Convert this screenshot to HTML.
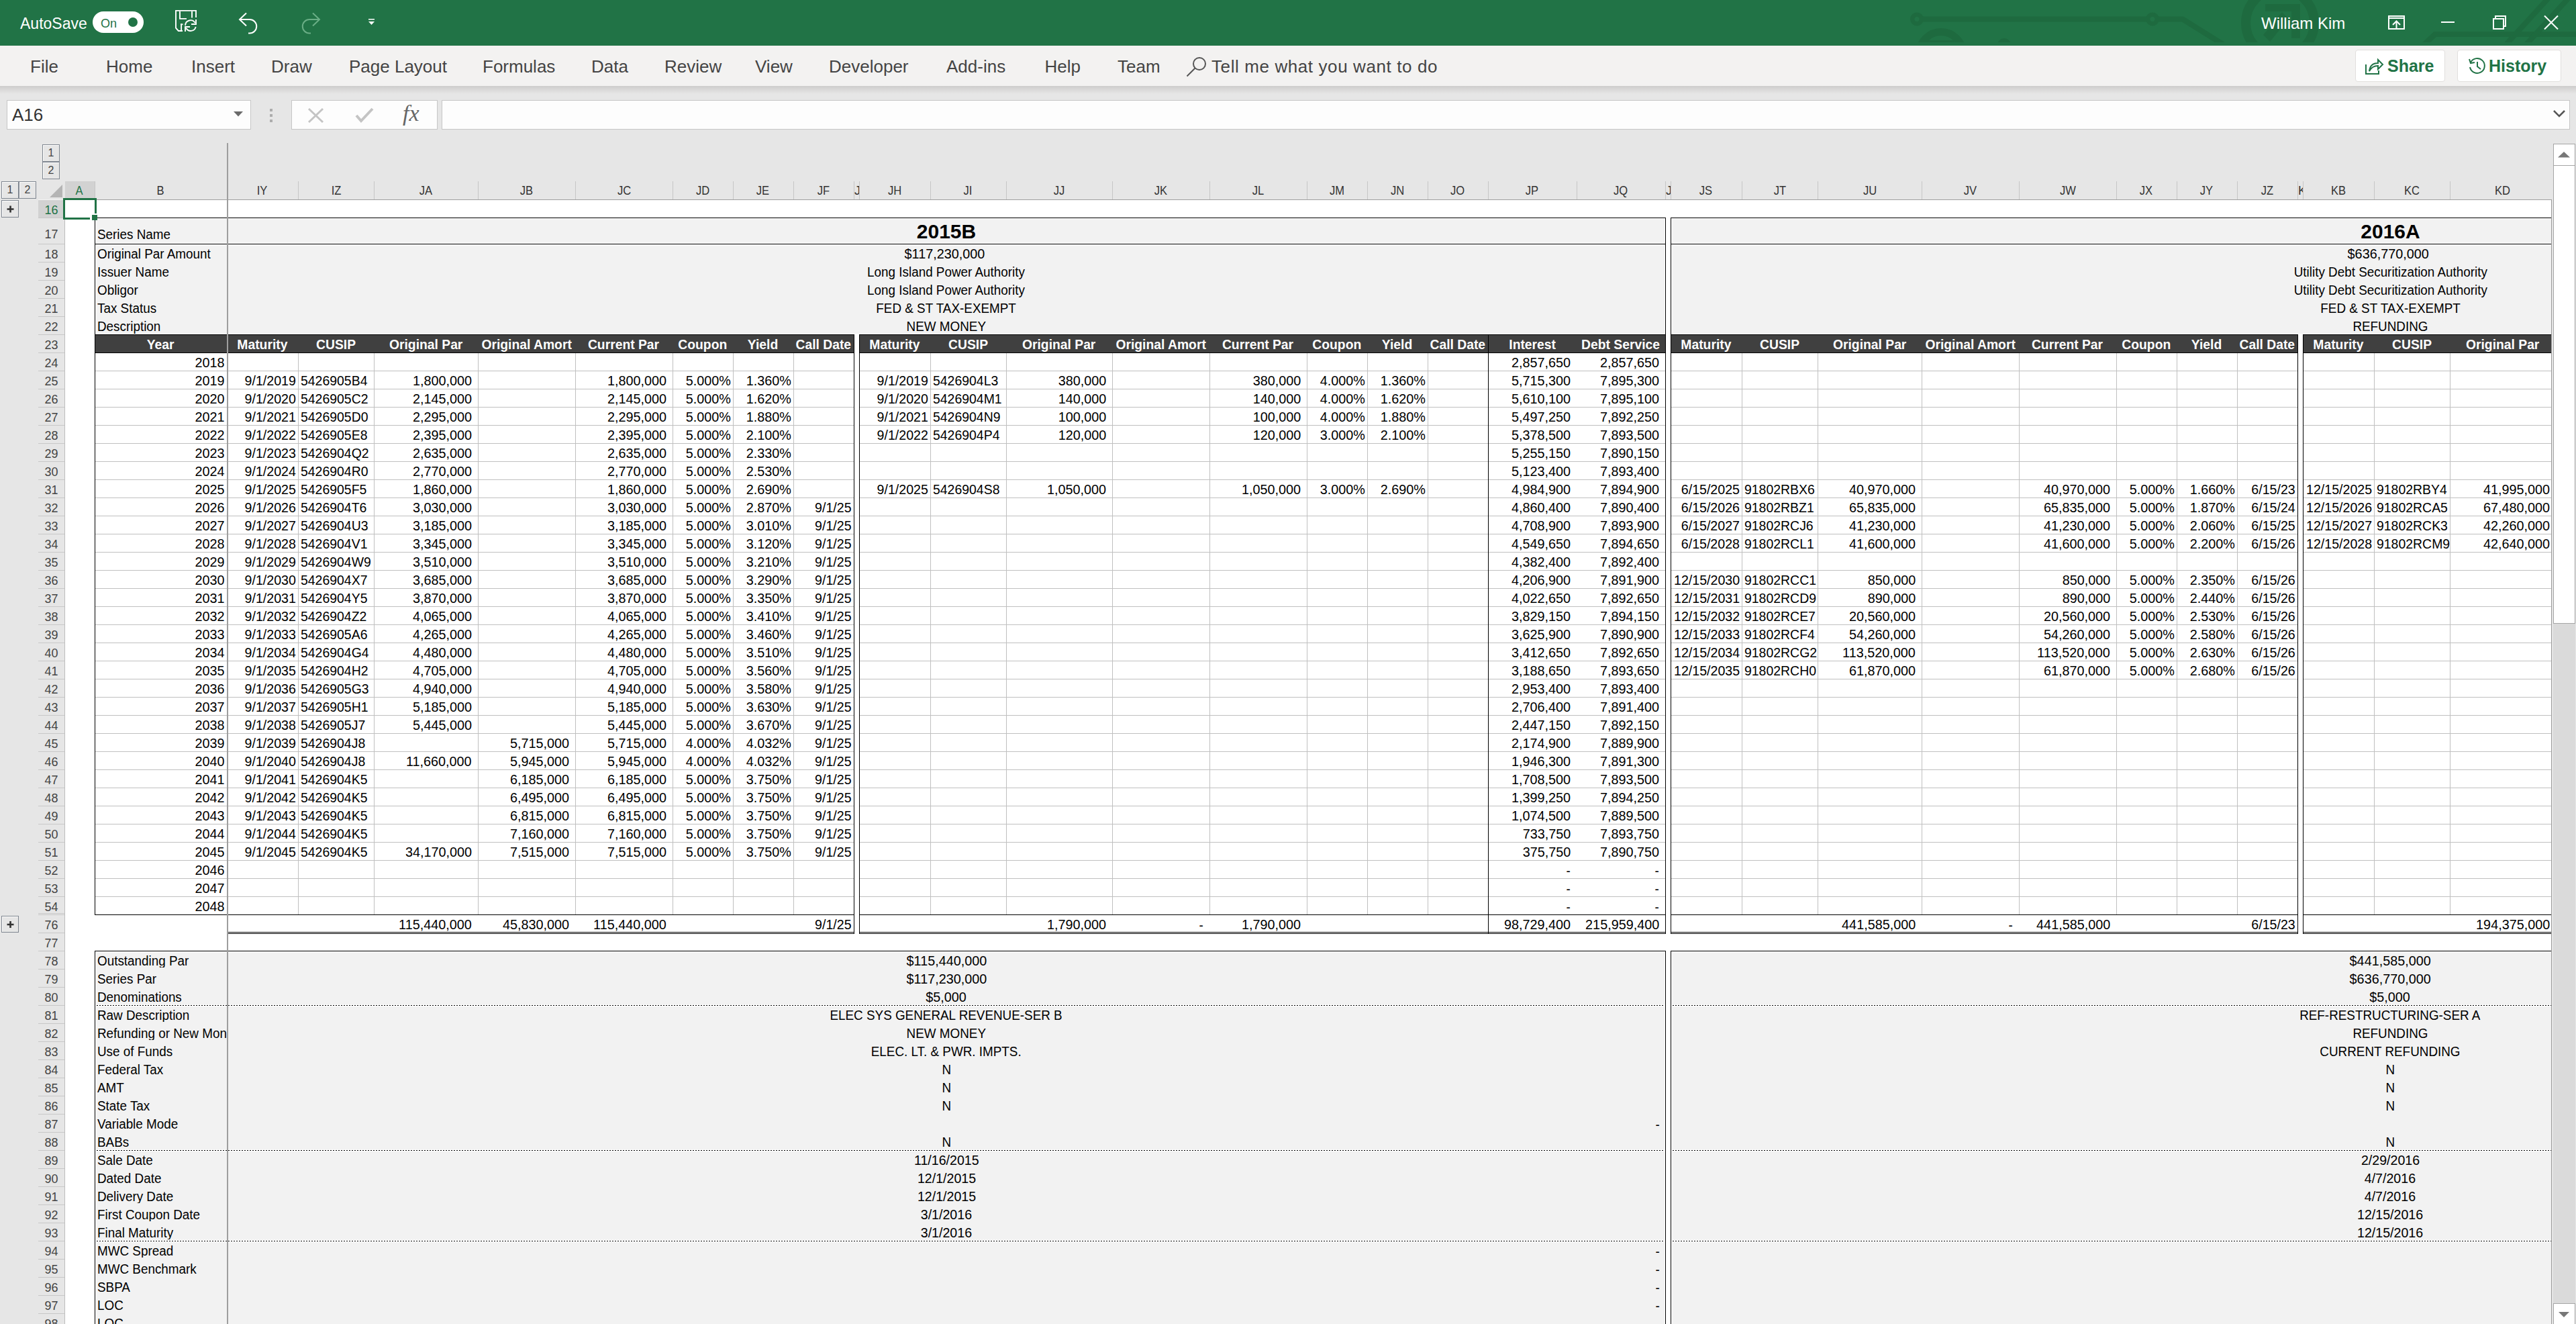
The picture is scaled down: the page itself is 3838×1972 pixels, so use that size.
<!DOCTYPE html><html><head><meta charset="utf-8"><style>html,body{margin:0;padding:0;width:3838px;height:1972px;overflow:hidden;background:#fff}body{position:relative;font-family:"Liberation Sans",sans-serif}div{position:absolute;box-sizing:border-box}.t{white-space:nowrap}</style></head><body>
<div style="left:0px;top:0px;width:3838px;height:68px;background:#217346;"></div>
<svg style="position:absolute;left:0;top:0" width="3838" height="63" viewBox="0 0 3838 63"><g fill="none" stroke="#1e6a3f" stroke-linecap="butt"><circle cx="2856" cy="28.5" r="6.8" stroke-width="6.5"/><line x1="2862" y1="28.5" x2="3201" y2="28.5" stroke-width="8"/><circle cx="3207" cy="28.5" r="6.8" stroke-width="6.5"/><polyline points="3213,28.5 3252,28.5 3312,66" stroke-width="8"/><circle cx="2892" cy="80" r="32.5" stroke-width="11"/><line x1="2870" y1="63" x2="2912" y2="63" stroke-width="6"/><circle cx="3397" cy="34" r="51" stroke-width="14"/><polyline points="3612,66 3628,51 3838,51" stroke-width="8"/><line x1="3798" y1="-4" x2="3734" y2="66" stroke-width="8"/><line x1="3828" y1="-4" x2="3764" y2="66" stroke-width="8"/></g><g fill="#1e6a3f"><circle cx="2986" cy="67" r="10"/><rect x="3375" y="6" width="52" height="11"/><rect x="3414" y="6" width="13" height="51"/><polygon points="3400,18 3410,28 3382,62 3372,52"/></g></svg>
<div class="t" style="left:30px;top:22px;font-size:23px;line-height:26px;font-weight:normal;color:#fff;">AutoSave</div>
<div style="left:138px;top:17px;width:76px;height:32px;border-radius:16px;background:#fff"></div>
<div class="t" style="left:150px;top:25px;font-size:18px;line-height:20px;font-weight:normal;color:#217346;">On</div>
<div style="left:190.5px;top:25.5px;width:14.5px;height:14.5px;border-radius:50%;background:#217346"></div>
<svg style="position:absolute;left:256px;top:10px" width="42" height="42" viewBox="256 10 42 42" fill="none" stroke="#fff" stroke-width="1.9"><path d="M292 26 L292 15.9 L262 15.9 L262 41.7 L265.8 46 L272 46"/><path d="M268 16.8 L268 27.9 L278 27.9"/><path d="M286 16.8 L286 26.5"/><path d="M270.1 35.4 L270.1 47"/><path d="M269 36.3 L272.5 36.3"/><path d="M276.1 37.9 A 7.8 7.8 0 0 1 290.6 34"/><path d="M292 29 L292 36 L285 36"/><path d="M291.7 39.9 A 7.8 7.8 0 0 1 277.2 41.8"/><path d="M276 47 L276 40 L283 40"/></svg>
<svg style="position:absolute;left:350px;top:14px" width="40" height="40" viewBox="0 0 40 40" fill="none" stroke="#fff" stroke-width="2"><path d="M17 5.5 L7 15 L17 24.5"/><path d="M7 15 L22 15 A 10 10 0 0 1 22 35.5 L 20 35.5"/></svg>
<svg style="position:absolute;left:443px;top:14px" width="40" height="40" viewBox="0 0 40 40" fill="none" stroke="#6aae86" stroke-width="2"><path d="M23 5.5 L33 15 L23 24.5"/><path d="M33 15 L18 15 A 10 10 0 0 0 18 35.5 L 20 35.5"/></svg>
<svg style="position:absolute;left:545px;top:24px" width="18" height="18" viewBox="0 0 18 18"><rect x="4" y="4" width="9" height="1.5" fill="#fff"/><polygon points="4,8 13,8 8.5,13" fill="#fff"/></svg>
<div class="t" style="left:3369px;top:21px;font-size:24px;line-height:28px;font-weight:normal;color:#fff;">William Kim</div>
<svg style="position:absolute;left:3540px;top:10px" width="298" height="50" viewBox="3540 10 298 50" fill="none" stroke="#fff" stroke-width="2"><rect x="3559" y="24" width="23" height="19"/><line x1="3559" y1="27" x2="3582" y2="27"/><line x1="3570.5" y1="32" x2="3570.5" y2="43"/><polyline points="3565,37 3570.5,31.5 3576,37"/><line x1="3637" y1="33" x2="3657" y2="33"/><rect x="3715" y="28" width="15" height="15"/><polyline points="3718,28 3718,24 3733,24 3733,39 3730,39"/><line x1="3791" y1="23.5" x2="3811" y2="43.5"/><line x1="3811" y1="23.5" x2="3791" y2="43.5"/></svg>
<div style="left:0px;top:68px;width:3838px;height:60px;background:#f3f2f1;"></div>
<div class="t" style="left:45px;top:84px;font-size:26px;line-height:30px;color:#444">File</div>
<div class="t" style="left:158px;top:84px;font-size:26px;line-height:30px;color:#444">Home</div>
<div class="t" style="left:285px;top:84px;font-size:26px;line-height:30px;color:#444">Insert</div>
<div class="t" style="left:404px;top:84px;font-size:26px;line-height:30px;color:#444">Draw</div>
<div class="t" style="left:520px;top:84px;font-size:26px;line-height:30px;color:#444">Page Layout</div>
<div class="t" style="left:719px;top:84px;font-size:26px;line-height:30px;color:#444">Formulas</div>
<div class="t" style="left:881px;top:84px;font-size:26px;line-height:30px;color:#444">Data</div>
<div class="t" style="left:990px;top:84px;font-size:26px;line-height:30px;color:#444">Review</div>
<div class="t" style="left:1125px;top:84px;font-size:26px;line-height:30px;color:#444">View</div>
<div class="t" style="left:1235px;top:84px;font-size:26px;line-height:30px;color:#444">Developer</div>
<div class="t" style="left:1410px;top:84px;font-size:26px;line-height:30px;color:#444">Add-ins</div>
<div class="t" style="left:1556.5px;top:84px;font-size:26px;line-height:30px;color:#444">Help</div>
<div class="t" style="left:1665px;top:84px;font-size:26px;line-height:30px;color:#444">Team</div>
<svg style="position:absolute;left:1760px;top:80px" width="40" height="40" viewBox="1760 80 40 40" fill="none" stroke="#555" stroke-width="2"><circle cx="1787" cy="95" r="9"/><line x1="1780.5" y1="101.5" x2="1768.5" y2="113.5"/></svg>
<div class="t" style="left:1805px;top:84px;font-size:26px;line-height:30px;color:#444;letter-spacing:0.6px">Tell me what you want to do</div>
<div style="left:3509px;top:74px;width:134px;height:48px;background:#fff;border:1px solid #e1dfdd;border-radius:4px"></div>
<div style="left:3661px;top:74px;width:155px;height:48px;background:#fff;border:1px solid #e1dfdd;border-radius:4px"></div>
<svg style="position:absolute;left:3522px;top:84px" width="30" height="30" viewBox="0 0 30 30" fill="none" stroke="#217346" stroke-width="2"><path d="M3 12 L3 26 L22 26 L22 21"/><path d="M8 22 C 9 13 14 10 21 10 L21 5 L28 12 L21 19 L21 14 C 15 14 11 16 8 22 Z"/></svg>
<div class="t" style="left:3557px;top:83px;font-size:25px;line-height:30px;font-weight:bold;color:#217346">Share</div>
<svg style="position:absolute;left:3676px;top:84px" width="30" height="30" viewBox="0 0 30 30" fill="none" stroke="#217346" stroke-width="2"><path d="M5 9 A 11 11 0 1 1 4 16"/><polyline points="3,4 5,10 11,9"/><polyline points="15,8 15,15 20,19"/></svg>
<div class="t" style="left:3708px;top:83px;font-size:25px;line-height:30px;font-weight:bold;color:#217346">History</div>
<div style="left:0px;top:128px;width:3838px;height:169px;background:#e6e6e6;"></div>
<div style="left:0;top:128px;width:3838px;height:12px;background:linear-gradient(#cecdcc,#e6e6e6)"></div>
<div style="left:10px;top:149px;width:364px;height:44px;background:#fdfdfd;border:1px solid #c6c6c6"></div>
<div class="t" style="left:18px;top:156px;font-size:26px;line-height:30px;color:#333">A16</div>
<svg style="position:absolute;left:346px;top:164px" width="18" height="12" viewBox="0 0 18 12"><polygon points="2,2 16,2 9,9.5" fill="#6a6a6a"/></svg>
<div style="left:402px;top:162px;width:4px;height:4px;background:#adadad;"></div>
<div style="left:402px;top:170px;width:4px;height:4px;background:#adadad;"></div>
<div style="left:402px;top:178px;width:4px;height:4px;background:#adadad;"></div>
<div style="left:434px;top:149px;width:218px;height:44px;background:#fdfdfd;border:1px solid #c6c6c6"></div>
<svg style="position:absolute;left:455px;top:158px" width="32" height="28" viewBox="0 0 32 28" fill="none" stroke="#c4c4c4" stroke-width="3"><line x1="5" y1="4" x2="26" y2="24"/><line x1="26" y1="4" x2="5" y2="24"/></svg>
<svg style="position:absolute;left:527px;top:158px" width="32" height="28" viewBox="0 0 32 28" fill="none" stroke="#c4c4c4" stroke-width="4"><polyline points="4,14 11,22 28,4"/></svg>
<div class="t" style="left:600px;top:150px;font-family:'Liberation Serif',serif;font-style:italic;font-size:34px;line-height:38px;color:#666">fx</div>
<div style="left:658px;top:149px;width:3171px;height:44px;background:#fdfdfd;border:1px solid #c6c6c6"></div>
<svg style="position:absolute;left:3800px;top:160px" width="26" height="20" viewBox="0 0 26 20" fill="none" stroke="#555" stroke-width="2.5"><polyline points="5,5 13,13 21,5"/></svg>
<div style="left:63px;top:215px;width:26px;height:26px;border:1px solid #7f8690;background:#e6e6e6;box-shadow:inset 1px 1px 0 #fff"></div>
<div class="t" style="left:63px;width:26px;top:219px;font-size:16px;line-height:18px;color:#444;text-align:center">1</div>
<div style="left:63px;top:241px;width:26px;height:26px;border:1px solid #7f8690;background:#e6e6e6;box-shadow:inset 1px 1px 0 #fff"></div>
<div class="t" style="left:63px;width:26px;top:245px;font-size:16px;line-height:18px;color:#444;text-align:center">2</div>
<div style="left:2px;top:270px;width:26px;height:26px;border:1px solid #7f8690;background:#e6e6e6;box-shadow:inset 1px 1px 0 #fff"></div>
<div class="t" style="left:2px;width:26px;top:274px;font-size:16px;line-height:18px;color:#444;text-align:center">1</div>
<div style="left:28px;top:270px;width:26px;height:26px;border:1px solid #7f8690;background:#e6e6e6;box-shadow:inset 1px 1px 0 #fff"></div>
<div class="t" style="left:28px;width:26px;top:274px;font-size:16px;line-height:18px;color:#444;text-align:center">2</div>
<svg style="position:absolute;left:72px;top:273px" width="24" height="24" viewBox="0 0 24 24"><polygon points="21,2 21,21 2,21" fill="#b4b4b4"/></svg>
<div style="left:97px;top:270px;width:44px;height:27px;background:#d2d2d2;"></div>
<div class="t" style="left:96px;width:45px;top:274px;font-size:18px;line-height:20px;color:#217346;text-align:center"><span style="display:inline-block;transform:scaleX(0.92)">A</span></div>
<div class="t" style="left:141px;width:197px;top:274px;font-size:18px;line-height:20px;color:#333;text-align:center"><span style="display:inline-block;transform:scaleX(0.92)">B</span></div>
<div class="t" style="left:338px;width:106px;top:274px;font-size:18px;line-height:20px;color:#333;text-align:center"><span style="display:inline-block;transform:scaleX(0.92)">IY</span></div>
<div style="left:444px;top:270px;width:1px;height:27px;background:#c6c6c6;"></div>
<div class="t" style="left:444px;width:113px;top:274px;font-size:18px;line-height:20px;color:#333;text-align:center"><span style="display:inline-block;transform:scaleX(0.92)">IZ</span></div>
<div style="left:557px;top:270px;width:1px;height:27px;background:#c6c6c6;"></div>
<div class="t" style="left:557px;width:155px;top:274px;font-size:18px;line-height:20px;color:#333;text-align:center"><span style="display:inline-block;transform:scaleX(0.92)">JA</span></div>
<div style="left:712px;top:270px;width:1px;height:27px;background:#c6c6c6;"></div>
<div class="t" style="left:712px;width:145px;top:274px;font-size:18px;line-height:20px;color:#333;text-align:center"><span style="display:inline-block;transform:scaleX(0.92)">JB</span></div>
<div style="left:857px;top:270px;width:1px;height:27px;background:#c6c6c6;"></div>
<div class="t" style="left:857px;width:145px;top:274px;font-size:18px;line-height:20px;color:#333;text-align:center"><span style="display:inline-block;transform:scaleX(0.92)">JC</span></div>
<div style="left:1002px;top:270px;width:1px;height:27px;background:#c6c6c6;"></div>
<div class="t" style="left:1002px;width:90px;top:274px;font-size:18px;line-height:20px;color:#333;text-align:center"><span style="display:inline-block;transform:scaleX(0.92)">JD</span></div>
<div style="left:1092px;top:270px;width:1px;height:27px;background:#c6c6c6;"></div>
<div class="t" style="left:1092px;width:90px;top:274px;font-size:18px;line-height:20px;color:#333;text-align:center"><span style="display:inline-block;transform:scaleX(0.92)">JE</span></div>
<div style="left:1182px;top:270px;width:1px;height:27px;background:#c6c6c6;"></div>
<div class="t" style="left:1182px;width:90px;top:274px;font-size:18px;line-height:20px;color:#333;text-align:center"><span style="display:inline-block;transform:scaleX(0.92)">JF</span></div>
<div style="left:1272px;top:270px;width:1px;height:27px;background:#c6c6c6;"></div>
<div class="t" style="left:1272px;width:8px;overflow:hidden;top:274px;font-size:18px;line-height:20px;color:#333"><span style="position:relative;left:1px">J</span></div>
<div style="left:1280px;top:270px;width:1px;height:27px;background:#c6c6c6;"></div>
<div class="t" style="left:1280px;width:106px;top:274px;font-size:18px;line-height:20px;color:#333;text-align:center"><span style="display:inline-block;transform:scaleX(0.92)">JH</span></div>
<div style="left:1386px;top:270px;width:1px;height:27px;background:#c6c6c6;"></div>
<div class="t" style="left:1386px;width:113px;top:274px;font-size:18px;line-height:20px;color:#333;text-align:center"><span style="display:inline-block;transform:scaleX(0.92)">JI</span></div>
<div style="left:1499px;top:270px;width:1px;height:27px;background:#c6c6c6;"></div>
<div class="t" style="left:1499px;width:158px;top:274px;font-size:18px;line-height:20px;color:#333;text-align:center"><span style="display:inline-block;transform:scaleX(0.92)">JJ</span></div>
<div style="left:1657px;top:270px;width:1px;height:27px;background:#c6c6c6;"></div>
<div class="t" style="left:1657px;width:145px;top:274px;font-size:18px;line-height:20px;color:#333;text-align:center"><span style="display:inline-block;transform:scaleX(0.92)">JK</span></div>
<div style="left:1802px;top:270px;width:1px;height:27px;background:#c6c6c6;"></div>
<div class="t" style="left:1802px;width:145px;top:274px;font-size:18px;line-height:20px;color:#333;text-align:center"><span style="display:inline-block;transform:scaleX(0.92)">JL</span></div>
<div style="left:1947px;top:270px;width:1px;height:27px;background:#c6c6c6;"></div>
<div class="t" style="left:1947px;width:90px;top:274px;font-size:18px;line-height:20px;color:#333;text-align:center"><span style="display:inline-block;transform:scaleX(0.92)">JM</span></div>
<div style="left:2037px;top:270px;width:1px;height:27px;background:#c6c6c6;"></div>
<div class="t" style="left:2037px;width:90px;top:274px;font-size:18px;line-height:20px;color:#333;text-align:center"><span style="display:inline-block;transform:scaleX(0.92)">JN</span></div>
<div style="left:2127px;top:270px;width:1px;height:27px;background:#c6c6c6;"></div>
<div class="t" style="left:2127px;width:90px;top:274px;font-size:18px;line-height:20px;color:#333;text-align:center"><span style="display:inline-block;transform:scaleX(0.92)">JO</span></div>
<div style="left:2217px;top:270px;width:1px;height:27px;background:#c6c6c6;"></div>
<div class="t" style="left:2217px;width:132px;top:274px;font-size:18px;line-height:20px;color:#333;text-align:center"><span style="display:inline-block;transform:scaleX(0.92)">JP</span></div>
<div style="left:2349px;top:270px;width:1px;height:27px;background:#c6c6c6;"></div>
<div class="t" style="left:2349px;width:132px;top:274px;font-size:18px;line-height:20px;color:#333;text-align:center"><span style="display:inline-block;transform:scaleX(0.92)">JQ</span></div>
<div style="left:2481px;top:270px;width:1px;height:27px;background:#c6c6c6;"></div>
<div class="t" style="left:2481px;width:8px;overflow:hidden;top:274px;font-size:18px;line-height:20px;color:#333"><span style="position:relative;left:1px">J</span></div>
<div style="left:2489px;top:270px;width:1px;height:27px;background:#c6c6c6;"></div>
<div class="t" style="left:2489px;width:106px;top:274px;font-size:18px;line-height:20px;color:#333;text-align:center"><span style="display:inline-block;transform:scaleX(0.92)">JS</span></div>
<div style="left:2595px;top:270px;width:1px;height:27px;background:#c6c6c6;"></div>
<div class="t" style="left:2595px;width:113px;top:274px;font-size:18px;line-height:20px;color:#333;text-align:center"><span style="display:inline-block;transform:scaleX(0.92)">JT</span></div>
<div style="left:2708px;top:270px;width:1px;height:27px;background:#c6c6c6;"></div>
<div class="t" style="left:2708px;width:155px;top:274px;font-size:18px;line-height:20px;color:#333;text-align:center"><span style="display:inline-block;transform:scaleX(0.92)">JU</span></div>
<div style="left:2863px;top:270px;width:1px;height:27px;background:#c6c6c6;"></div>
<div class="t" style="left:2863px;width:145px;top:274px;font-size:18px;line-height:20px;color:#333;text-align:center"><span style="display:inline-block;transform:scaleX(0.92)">JV</span></div>
<div style="left:3008px;top:270px;width:1px;height:27px;background:#c6c6c6;"></div>
<div class="t" style="left:3008px;width:145px;top:274px;font-size:18px;line-height:20px;color:#333;text-align:center"><span style="display:inline-block;transform:scaleX(0.92)">JW</span></div>
<div style="left:3153px;top:270px;width:1px;height:27px;background:#c6c6c6;"></div>
<div class="t" style="left:3153px;width:90px;top:274px;font-size:18px;line-height:20px;color:#333;text-align:center"><span style="display:inline-block;transform:scaleX(0.92)">JX</span></div>
<div style="left:3243px;top:270px;width:1px;height:27px;background:#c6c6c6;"></div>
<div class="t" style="left:3243px;width:90px;top:274px;font-size:18px;line-height:20px;color:#333;text-align:center"><span style="display:inline-block;transform:scaleX(0.92)">JY</span></div>
<div style="left:3333px;top:270px;width:1px;height:27px;background:#c6c6c6;"></div>
<div class="t" style="left:3333px;width:90px;top:274px;font-size:18px;line-height:20px;color:#333;text-align:center"><span style="display:inline-block;transform:scaleX(0.92)">JZ</span></div>
<div style="left:3423px;top:270px;width:1px;height:27px;background:#c6c6c6;"></div>
<div class="t" style="left:3423px;width:8px;overflow:hidden;top:274px;font-size:18px;line-height:20px;color:#333"><span style="position:relative;left:1px">K</span></div>
<div style="left:3431px;top:270px;width:1px;height:27px;background:#c6c6c6;"></div>
<div class="t" style="left:3431px;width:106px;top:274px;font-size:18px;line-height:20px;color:#333;text-align:center"><span style="display:inline-block;transform:scaleX(0.92)">KB</span></div>
<div style="left:3537px;top:270px;width:1px;height:27px;background:#c6c6c6;"></div>
<div class="t" style="left:3537px;width:113px;top:274px;font-size:18px;line-height:20px;color:#333;text-align:center"><span style="display:inline-block;transform:scaleX(0.92)">KC</span></div>
<div style="left:3650px;top:270px;width:1px;height:27px;background:#c6c6c6;"></div>
<div class="t" style="left:3650px;width:158px;top:274px;font-size:18px;line-height:20px;color:#333;text-align:center"><span style="display:inline-block;transform:scaleX(0.92)">KD</span></div>
<div style="left:141px;top:270px;width:1px;height:27px;background:#c6c6c6;"></div>
<div style="left:96px;top:297px;width:3706px;height:1px;background:#9e9e9e;"></div>
<div style="left:0px;top:297px;width:96px;height:1675px;background:#e6e6e6;"></div>
<div style="left:57px;top:297px;width:39px;height:1px;background:#f4f4f4;"></div>
<div style="left:57px;top:298px;width:39px;height:1px;background:#b8b8b8;"></div>
<div style="left:57px;top:298px;width:39px;height:26px;background:#d2d2d2;"></div>
<div style="left:57px;top:324px;width:39px;height:1px;background:#c8c8c8;"></div>
<div class="t" style="left:57px;width:39px;top:303px;font-size:18px;line-height:20px;color:#217346;text-align:center">16</div>
<div style="left:57px;top:363px;width:39px;height:1px;background:#c8c8c8;"></div>
<div class="t" style="left:57px;width:39px;top:339px;font-size:18px;line-height:20px;color:#444;text-align:center">17</div>
<div style="left:57px;top:390px;width:39px;height:1px;background:#c8c8c8;"></div>
<div class="t" style="left:57px;width:39px;top:369px;font-size:18px;line-height:20px;color:#444;text-align:center">18</div>
<div style="left:57px;top:417px;width:39px;height:1px;background:#c8c8c8;"></div>
<div class="t" style="left:57px;width:39px;top:396px;font-size:18px;line-height:20px;color:#444;text-align:center">19</div>
<div style="left:57px;top:444px;width:39px;height:1px;background:#c8c8c8;"></div>
<div class="t" style="left:57px;width:39px;top:423px;font-size:18px;line-height:20px;color:#444;text-align:center">20</div>
<div style="left:57px;top:471px;width:39px;height:1px;background:#c8c8c8;"></div>
<div class="t" style="left:57px;width:39px;top:450px;font-size:18px;line-height:20px;color:#444;text-align:center">21</div>
<div style="left:57px;top:498px;width:39px;height:1px;background:#c8c8c8;"></div>
<div class="t" style="left:57px;width:39px;top:477px;font-size:18px;line-height:20px;color:#444;text-align:center">22</div>
<div style="left:57px;top:525px;width:39px;height:1px;background:#c8c8c8;"></div>
<div class="t" style="left:57px;width:39px;top:504px;font-size:18px;line-height:20px;color:#444;text-align:center">23</div>
<div style="left:57px;top:552px;width:39px;height:1px;background:#c8c8c8;"></div>
<div class="t" style="left:57px;width:39px;top:531px;font-size:18px;line-height:20px;color:#444;text-align:center">24</div>
<div style="left:57px;top:579px;width:39px;height:1px;background:#c8c8c8;"></div>
<div class="t" style="left:57px;width:39px;top:558px;font-size:18px;line-height:20px;color:#444;text-align:center">25</div>
<div style="left:57px;top:606px;width:39px;height:1px;background:#c8c8c8;"></div>
<div class="t" style="left:57px;width:39px;top:585px;font-size:18px;line-height:20px;color:#444;text-align:center">26</div>
<div style="left:57px;top:633px;width:39px;height:1px;background:#c8c8c8;"></div>
<div class="t" style="left:57px;width:39px;top:612px;font-size:18px;line-height:20px;color:#444;text-align:center">27</div>
<div style="left:57px;top:660px;width:39px;height:1px;background:#c8c8c8;"></div>
<div class="t" style="left:57px;width:39px;top:639px;font-size:18px;line-height:20px;color:#444;text-align:center">28</div>
<div style="left:57px;top:687px;width:39px;height:1px;background:#c8c8c8;"></div>
<div class="t" style="left:57px;width:39px;top:666px;font-size:18px;line-height:20px;color:#444;text-align:center">29</div>
<div style="left:57px;top:714px;width:39px;height:1px;background:#c8c8c8;"></div>
<div class="t" style="left:57px;width:39px;top:693px;font-size:18px;line-height:20px;color:#444;text-align:center">30</div>
<div style="left:57px;top:741px;width:39px;height:1px;background:#c8c8c8;"></div>
<div class="t" style="left:57px;width:39px;top:720px;font-size:18px;line-height:20px;color:#444;text-align:center">31</div>
<div style="left:57px;top:768px;width:39px;height:1px;background:#c8c8c8;"></div>
<div class="t" style="left:57px;width:39px;top:747px;font-size:18px;line-height:20px;color:#444;text-align:center">32</div>
<div style="left:57px;top:795px;width:39px;height:1px;background:#c8c8c8;"></div>
<div class="t" style="left:57px;width:39px;top:774px;font-size:18px;line-height:20px;color:#444;text-align:center">33</div>
<div style="left:57px;top:822px;width:39px;height:1px;background:#c8c8c8;"></div>
<div class="t" style="left:57px;width:39px;top:801px;font-size:18px;line-height:20px;color:#444;text-align:center">34</div>
<div style="left:57px;top:849px;width:39px;height:1px;background:#c8c8c8;"></div>
<div class="t" style="left:57px;width:39px;top:828px;font-size:18px;line-height:20px;color:#444;text-align:center">35</div>
<div style="left:57px;top:876px;width:39px;height:1px;background:#c8c8c8;"></div>
<div class="t" style="left:57px;width:39px;top:855px;font-size:18px;line-height:20px;color:#444;text-align:center">36</div>
<div style="left:57px;top:903px;width:39px;height:1px;background:#c8c8c8;"></div>
<div class="t" style="left:57px;width:39px;top:882px;font-size:18px;line-height:20px;color:#444;text-align:center">37</div>
<div style="left:57px;top:930px;width:39px;height:1px;background:#c8c8c8;"></div>
<div class="t" style="left:57px;width:39px;top:909px;font-size:18px;line-height:20px;color:#444;text-align:center">38</div>
<div style="left:57px;top:957px;width:39px;height:1px;background:#c8c8c8;"></div>
<div class="t" style="left:57px;width:39px;top:936px;font-size:18px;line-height:20px;color:#444;text-align:center">39</div>
<div style="left:57px;top:984px;width:39px;height:1px;background:#c8c8c8;"></div>
<div class="t" style="left:57px;width:39px;top:963px;font-size:18px;line-height:20px;color:#444;text-align:center">40</div>
<div style="left:57px;top:1011px;width:39px;height:1px;background:#c8c8c8;"></div>
<div class="t" style="left:57px;width:39px;top:990px;font-size:18px;line-height:20px;color:#444;text-align:center">41</div>
<div style="left:57px;top:1038px;width:39px;height:1px;background:#c8c8c8;"></div>
<div class="t" style="left:57px;width:39px;top:1017px;font-size:18px;line-height:20px;color:#444;text-align:center">42</div>
<div style="left:57px;top:1065px;width:39px;height:1px;background:#c8c8c8;"></div>
<div class="t" style="left:57px;width:39px;top:1044px;font-size:18px;line-height:20px;color:#444;text-align:center">43</div>
<div style="left:57px;top:1092px;width:39px;height:1px;background:#c8c8c8;"></div>
<div class="t" style="left:57px;width:39px;top:1071px;font-size:18px;line-height:20px;color:#444;text-align:center">44</div>
<div style="left:57px;top:1119px;width:39px;height:1px;background:#c8c8c8;"></div>
<div class="t" style="left:57px;width:39px;top:1098px;font-size:18px;line-height:20px;color:#444;text-align:center">45</div>
<div style="left:57px;top:1146px;width:39px;height:1px;background:#c8c8c8;"></div>
<div class="t" style="left:57px;width:39px;top:1125px;font-size:18px;line-height:20px;color:#444;text-align:center">46</div>
<div style="left:57px;top:1173px;width:39px;height:1px;background:#c8c8c8;"></div>
<div class="t" style="left:57px;width:39px;top:1152px;font-size:18px;line-height:20px;color:#444;text-align:center">47</div>
<div style="left:57px;top:1200px;width:39px;height:1px;background:#c8c8c8;"></div>
<div class="t" style="left:57px;width:39px;top:1179px;font-size:18px;line-height:20px;color:#444;text-align:center">48</div>
<div style="left:57px;top:1227px;width:39px;height:1px;background:#c8c8c8;"></div>
<div class="t" style="left:57px;width:39px;top:1206px;font-size:18px;line-height:20px;color:#444;text-align:center">49</div>
<div style="left:57px;top:1254px;width:39px;height:1px;background:#c8c8c8;"></div>
<div class="t" style="left:57px;width:39px;top:1233px;font-size:18px;line-height:20px;color:#444;text-align:center">50</div>
<div style="left:57px;top:1281px;width:39px;height:1px;background:#c8c8c8;"></div>
<div class="t" style="left:57px;width:39px;top:1260px;font-size:18px;line-height:20px;color:#444;text-align:center">51</div>
<div style="left:57px;top:1308px;width:39px;height:1px;background:#c8c8c8;"></div>
<div class="t" style="left:57px;width:39px;top:1287px;font-size:18px;line-height:20px;color:#444;text-align:center">52</div>
<div style="left:57px;top:1335px;width:39px;height:1px;background:#c8c8c8;"></div>
<div class="t" style="left:57px;width:39px;top:1314px;font-size:18px;line-height:20px;color:#444;text-align:center">53</div>
<div style="left:57px;top:1362px;width:39px;height:1px;background:#c8c8c8;"></div>
<div class="t" style="left:57px;width:39px;top:1341px;font-size:18px;line-height:20px;color:#444;text-align:center">54</div>
<div style="left:57px;top:1389px;width:39px;height:1px;background:#c8c8c8;"></div>
<div class="t" style="left:57px;width:39px;top:1368px;font-size:18px;line-height:20px;color:#444;text-align:center">76</div>
<div style="left:57px;top:1416px;width:39px;height:1px;background:#c8c8c8;"></div>
<div class="t" style="left:57px;width:39px;top:1395px;font-size:18px;line-height:20px;color:#444;text-align:center">77</div>
<div style="left:57px;top:1443px;width:39px;height:1px;background:#c8c8c8;"></div>
<div class="t" style="left:57px;width:39px;top:1422px;font-size:18px;line-height:20px;color:#444;text-align:center">78</div>
<div style="left:57px;top:1470px;width:39px;height:1px;background:#c8c8c8;"></div>
<div class="t" style="left:57px;width:39px;top:1449px;font-size:18px;line-height:20px;color:#444;text-align:center">79</div>
<div style="left:57px;top:1497px;width:39px;height:1px;background:#c8c8c8;"></div>
<div class="t" style="left:57px;width:39px;top:1476px;font-size:18px;line-height:20px;color:#444;text-align:center">80</div>
<div style="left:57px;top:1524px;width:39px;height:1px;background:#c8c8c8;"></div>
<div class="t" style="left:57px;width:39px;top:1503px;font-size:18px;line-height:20px;color:#444;text-align:center">81</div>
<div style="left:57px;top:1551px;width:39px;height:1px;background:#c8c8c8;"></div>
<div class="t" style="left:57px;width:39px;top:1530px;font-size:18px;line-height:20px;color:#444;text-align:center">82</div>
<div style="left:57px;top:1578px;width:39px;height:1px;background:#c8c8c8;"></div>
<div class="t" style="left:57px;width:39px;top:1557px;font-size:18px;line-height:20px;color:#444;text-align:center">83</div>
<div style="left:57px;top:1605px;width:39px;height:1px;background:#c8c8c8;"></div>
<div class="t" style="left:57px;width:39px;top:1584px;font-size:18px;line-height:20px;color:#444;text-align:center">84</div>
<div style="left:57px;top:1632px;width:39px;height:1px;background:#c8c8c8;"></div>
<div class="t" style="left:57px;width:39px;top:1611px;font-size:18px;line-height:20px;color:#444;text-align:center">85</div>
<div style="left:57px;top:1659px;width:39px;height:1px;background:#c8c8c8;"></div>
<div class="t" style="left:57px;width:39px;top:1638px;font-size:18px;line-height:20px;color:#444;text-align:center">86</div>
<div style="left:57px;top:1686px;width:39px;height:1px;background:#c8c8c8;"></div>
<div class="t" style="left:57px;width:39px;top:1665px;font-size:18px;line-height:20px;color:#444;text-align:center">87</div>
<div style="left:57px;top:1713px;width:39px;height:1px;background:#c8c8c8;"></div>
<div class="t" style="left:57px;width:39px;top:1692px;font-size:18px;line-height:20px;color:#444;text-align:center">88</div>
<div style="left:57px;top:1740px;width:39px;height:1px;background:#c8c8c8;"></div>
<div class="t" style="left:57px;width:39px;top:1719px;font-size:18px;line-height:20px;color:#444;text-align:center">89</div>
<div style="left:57px;top:1767px;width:39px;height:1px;background:#c8c8c8;"></div>
<div class="t" style="left:57px;width:39px;top:1746px;font-size:18px;line-height:20px;color:#444;text-align:center">90</div>
<div style="left:57px;top:1794px;width:39px;height:1px;background:#c8c8c8;"></div>
<div class="t" style="left:57px;width:39px;top:1773px;font-size:18px;line-height:20px;color:#444;text-align:center">91</div>
<div style="left:57px;top:1821px;width:39px;height:1px;background:#c8c8c8;"></div>
<div class="t" style="left:57px;width:39px;top:1800px;font-size:18px;line-height:20px;color:#444;text-align:center">92</div>
<div style="left:57px;top:1848px;width:39px;height:1px;background:#c8c8c8;"></div>
<div class="t" style="left:57px;width:39px;top:1827px;font-size:18px;line-height:20px;color:#444;text-align:center">93</div>
<div style="left:57px;top:1875px;width:39px;height:1px;background:#c8c8c8;"></div>
<div class="t" style="left:57px;width:39px;top:1854px;font-size:18px;line-height:20px;color:#444;text-align:center">94</div>
<div style="left:57px;top:1902px;width:39px;height:1px;background:#c8c8c8;"></div>
<div class="t" style="left:57px;width:39px;top:1881px;font-size:18px;line-height:20px;color:#444;text-align:center">95</div>
<div style="left:57px;top:1929px;width:39px;height:1px;background:#c8c8c8;"></div>
<div class="t" style="left:57px;width:39px;top:1908px;font-size:18px;line-height:20px;color:#444;text-align:center">96</div>
<div style="left:57px;top:1956px;width:39px;height:1px;background:#c8c8c8;"></div>
<div class="t" style="left:57px;width:39px;top:1935px;font-size:18px;line-height:20px;color:#444;text-align:center">97</div>
<div style="left:57px;top:1983px;width:39px;height:1px;background:#c8c8c8;"></div>
<div class="t" style="left:57px;width:39px;top:1962px;font-size:18px;line-height:20px;color:#444;text-align:center">98</div>
<div style="left:57px;top:1360px;width:39px;height:1px;background:#c8c8c8;"></div>
<div style="left:96px;top:297px;width:1px;height:1675px;background:#bdbdbd;"></div>
<div style="left:2px;top:298px;width:26px;height:26px;border:1px solid #7f8690;background:#e6e6e6;box-shadow:inset 1px 1px 0 #fff"></div>
<svg style="position:absolute;left:2.5px;top:298px" width="25" height="26" viewBox="0 0 25 24"><path d="M7.5 12.5 H17.5 M12.5 7.5 V17.5" stroke="#333" stroke-width="2.6"/></svg>
<div style="left:2px;top:1364px;width:26px;height:25px;border:1px solid #7f8690;background:#e6e6e6;box-shadow:inset 1px 1px 0 #fff"></div>
<svg style="position:absolute;left:2.5px;top:1364px" width="25" height="25" viewBox="0 0 25 24"><path d="M7.5 12.5 H17.5 M12.5 7.5 V17.5" stroke="#333" stroke-width="2.6"/></svg>
<div style="left:97px;top:298px;width:3705px;height:1674px;background:#ffffff;"></div>
<div style="left:143px;top:326px;width:2337px;height:36px;background:#f2f2f2;"></div>
<div style="left:143px;top:365px;width:2337px;height:132px;background:#f2f2f2;"></div>
<div style="left:2491px;top:326px;width:1311px;height:36px;background:#f2f2f2;"></div>
<div style="left:2491px;top:365px;width:1311px;height:132px;background:#f2f2f2;"></div>
<div style="left:142px;top:498px;width:1130px;height:27px;background:#404040;"></div>
<div style="left:1280px;top:498px;width:1201px;height:27px;background:#404040;"></div>
<div style="left:2489px;top:498px;width:934px;height:27px;background:#404040;"></div>
<div style="left:3431px;top:498px;width:371px;height:27px;background:#404040;"></div>
<div style="left:143px;top:1418px;width:2337px;height:78px;background:#f2f2f2;"></div>
<div style="left:143px;top:1499px;width:2337px;height:213px;background:#f2f2f2;"></div>
<div style="left:143px;top:1715px;width:2337px;height:132px;background:#f2f2f2;"></div>
<div style="left:143px;top:1850px;width:2337px;height:122px;background:#f2f2f2;"></div>
<div style="left:2491px;top:1418px;width:1311px;height:78px;background:#f2f2f2;"></div>
<div style="left:2491px;top:1499px;width:1311px;height:213px;background:#f2f2f2;"></div>
<div style="left:2491px;top:1715px;width:1311px;height:132px;background:#f2f2f2;"></div>
<div style="left:2491px;top:1850px;width:1311px;height:122px;background:#f2f2f2;"></div>
<div style="left:141px;top:552px;width:1131px;height:1px;background:#c0c0c0;"></div>
<div style="left:141px;top:579px;width:1131px;height:1px;background:#c0c0c0;"></div>
<div style="left:141px;top:606px;width:1131px;height:1px;background:#c0c0c0;"></div>
<div style="left:141px;top:633px;width:1131px;height:1px;background:#c0c0c0;"></div>
<div style="left:141px;top:660px;width:1131px;height:1px;background:#c0c0c0;"></div>
<div style="left:141px;top:687px;width:1131px;height:1px;background:#c0c0c0;"></div>
<div style="left:141px;top:714px;width:1131px;height:1px;background:#c0c0c0;"></div>
<div style="left:141px;top:741px;width:1131px;height:1px;background:#c0c0c0;"></div>
<div style="left:141px;top:768px;width:1131px;height:1px;background:#c0c0c0;"></div>
<div style="left:141px;top:795px;width:1131px;height:1px;background:#c0c0c0;"></div>
<div style="left:141px;top:822px;width:1131px;height:1px;background:#c0c0c0;"></div>
<div style="left:141px;top:849px;width:1131px;height:1px;background:#c0c0c0;"></div>
<div style="left:141px;top:876px;width:1131px;height:1px;background:#c0c0c0;"></div>
<div style="left:141px;top:903px;width:1131px;height:1px;background:#c0c0c0;"></div>
<div style="left:141px;top:930px;width:1131px;height:1px;background:#c0c0c0;"></div>
<div style="left:141px;top:957px;width:1131px;height:1px;background:#c0c0c0;"></div>
<div style="left:141px;top:984px;width:1131px;height:1px;background:#c0c0c0;"></div>
<div style="left:141px;top:1011px;width:1131px;height:1px;background:#c0c0c0;"></div>
<div style="left:141px;top:1038px;width:1131px;height:1px;background:#c0c0c0;"></div>
<div style="left:141px;top:1065px;width:1131px;height:1px;background:#c0c0c0;"></div>
<div style="left:141px;top:1092px;width:1131px;height:1px;background:#c0c0c0;"></div>
<div style="left:141px;top:1119px;width:1131px;height:1px;background:#c0c0c0;"></div>
<div style="left:141px;top:1146px;width:1131px;height:1px;background:#c0c0c0;"></div>
<div style="left:141px;top:1173px;width:1131px;height:1px;background:#c0c0c0;"></div>
<div style="left:141px;top:1200px;width:1131px;height:1px;background:#c0c0c0;"></div>
<div style="left:141px;top:1227px;width:1131px;height:1px;background:#c0c0c0;"></div>
<div style="left:141px;top:1254px;width:1131px;height:1px;background:#c0c0c0;"></div>
<div style="left:141px;top:1281px;width:1131px;height:1px;background:#c0c0c0;"></div>
<div style="left:141px;top:1308px;width:1131px;height:1px;background:#c0c0c0;"></div>
<div style="left:141px;top:1335px;width:1131px;height:1px;background:#c0c0c0;"></div>
<div style="left:338px;top:525px;width:1px;height:837px;background:#c0c0c0;"></div>
<div style="left:444px;top:525px;width:1px;height:837px;background:#c0c0c0;"></div>
<div style="left:557px;top:525px;width:1px;height:837px;background:#c0c0c0;"></div>
<div style="left:712px;top:525px;width:1px;height:837px;background:#c0c0c0;"></div>
<div style="left:857px;top:525px;width:1px;height:837px;background:#c0c0c0;"></div>
<div style="left:1002px;top:525px;width:1px;height:837px;background:#c0c0c0;"></div>
<div style="left:1092px;top:525px;width:1px;height:837px;background:#c0c0c0;"></div>
<div style="left:1182px;top:525px;width:1px;height:837px;background:#c0c0c0;"></div>
<div style="left:1280px;top:552px;width:1201px;height:1px;background:#c0c0c0;"></div>
<div style="left:1280px;top:579px;width:1201px;height:1px;background:#c0c0c0;"></div>
<div style="left:1280px;top:606px;width:1201px;height:1px;background:#c0c0c0;"></div>
<div style="left:1280px;top:633px;width:1201px;height:1px;background:#c0c0c0;"></div>
<div style="left:1280px;top:660px;width:1201px;height:1px;background:#c0c0c0;"></div>
<div style="left:1280px;top:687px;width:1201px;height:1px;background:#c0c0c0;"></div>
<div style="left:1280px;top:714px;width:1201px;height:1px;background:#c0c0c0;"></div>
<div style="left:1280px;top:741px;width:1201px;height:1px;background:#c0c0c0;"></div>
<div style="left:1280px;top:768px;width:1201px;height:1px;background:#c0c0c0;"></div>
<div style="left:1280px;top:795px;width:1201px;height:1px;background:#c0c0c0;"></div>
<div style="left:1280px;top:822px;width:1201px;height:1px;background:#c0c0c0;"></div>
<div style="left:1280px;top:849px;width:1201px;height:1px;background:#c0c0c0;"></div>
<div style="left:1280px;top:876px;width:1201px;height:1px;background:#c0c0c0;"></div>
<div style="left:1280px;top:903px;width:1201px;height:1px;background:#c0c0c0;"></div>
<div style="left:1280px;top:930px;width:1201px;height:1px;background:#c0c0c0;"></div>
<div style="left:1280px;top:957px;width:1201px;height:1px;background:#c0c0c0;"></div>
<div style="left:1280px;top:984px;width:1201px;height:1px;background:#c0c0c0;"></div>
<div style="left:1280px;top:1011px;width:1201px;height:1px;background:#c0c0c0;"></div>
<div style="left:1280px;top:1038px;width:1201px;height:1px;background:#c0c0c0;"></div>
<div style="left:1280px;top:1065px;width:1201px;height:1px;background:#c0c0c0;"></div>
<div style="left:1280px;top:1092px;width:1201px;height:1px;background:#c0c0c0;"></div>
<div style="left:1280px;top:1119px;width:1201px;height:1px;background:#c0c0c0;"></div>
<div style="left:1280px;top:1146px;width:1201px;height:1px;background:#c0c0c0;"></div>
<div style="left:1280px;top:1173px;width:1201px;height:1px;background:#c0c0c0;"></div>
<div style="left:1280px;top:1200px;width:1201px;height:1px;background:#c0c0c0;"></div>
<div style="left:1280px;top:1227px;width:1201px;height:1px;background:#c0c0c0;"></div>
<div style="left:1280px;top:1254px;width:1201px;height:1px;background:#c0c0c0;"></div>
<div style="left:1280px;top:1281px;width:1201px;height:1px;background:#c0c0c0;"></div>
<div style="left:1280px;top:1308px;width:1201px;height:1px;background:#c0c0c0;"></div>
<div style="left:1280px;top:1335px;width:1201px;height:1px;background:#c0c0c0;"></div>
<div style="left:1386px;top:525px;width:1px;height:837px;background:#c0c0c0;"></div>
<div style="left:1499px;top:525px;width:1px;height:837px;background:#c0c0c0;"></div>
<div style="left:1657px;top:525px;width:1px;height:837px;background:#c0c0c0;"></div>
<div style="left:1802px;top:525px;width:1px;height:837px;background:#c0c0c0;"></div>
<div style="left:1947px;top:525px;width:1px;height:837px;background:#c0c0c0;"></div>
<div style="left:2037px;top:525px;width:1px;height:837px;background:#c0c0c0;"></div>
<div style="left:2127px;top:525px;width:1px;height:837px;background:#c0c0c0;"></div>
<div style="left:2489px;top:552px;width:934px;height:1px;background:#c0c0c0;"></div>
<div style="left:2489px;top:579px;width:934px;height:1px;background:#c0c0c0;"></div>
<div style="left:2489px;top:606px;width:934px;height:1px;background:#c0c0c0;"></div>
<div style="left:2489px;top:633px;width:934px;height:1px;background:#c0c0c0;"></div>
<div style="left:2489px;top:660px;width:934px;height:1px;background:#c0c0c0;"></div>
<div style="left:2489px;top:687px;width:934px;height:1px;background:#c0c0c0;"></div>
<div style="left:2489px;top:714px;width:934px;height:1px;background:#c0c0c0;"></div>
<div style="left:2489px;top:741px;width:934px;height:1px;background:#c0c0c0;"></div>
<div style="left:2489px;top:768px;width:934px;height:1px;background:#c0c0c0;"></div>
<div style="left:2489px;top:795px;width:934px;height:1px;background:#c0c0c0;"></div>
<div style="left:2489px;top:822px;width:934px;height:1px;background:#c0c0c0;"></div>
<div style="left:2489px;top:849px;width:934px;height:1px;background:#c0c0c0;"></div>
<div style="left:2489px;top:876px;width:934px;height:1px;background:#c0c0c0;"></div>
<div style="left:2489px;top:903px;width:934px;height:1px;background:#c0c0c0;"></div>
<div style="left:2489px;top:930px;width:934px;height:1px;background:#c0c0c0;"></div>
<div style="left:2489px;top:957px;width:934px;height:1px;background:#c0c0c0;"></div>
<div style="left:2489px;top:984px;width:934px;height:1px;background:#c0c0c0;"></div>
<div style="left:2489px;top:1011px;width:934px;height:1px;background:#c0c0c0;"></div>
<div style="left:2489px;top:1038px;width:934px;height:1px;background:#c0c0c0;"></div>
<div style="left:2489px;top:1065px;width:934px;height:1px;background:#c0c0c0;"></div>
<div style="left:2489px;top:1092px;width:934px;height:1px;background:#c0c0c0;"></div>
<div style="left:2489px;top:1119px;width:934px;height:1px;background:#c0c0c0;"></div>
<div style="left:2489px;top:1146px;width:934px;height:1px;background:#c0c0c0;"></div>
<div style="left:2489px;top:1173px;width:934px;height:1px;background:#c0c0c0;"></div>
<div style="left:2489px;top:1200px;width:934px;height:1px;background:#c0c0c0;"></div>
<div style="left:2489px;top:1227px;width:934px;height:1px;background:#c0c0c0;"></div>
<div style="left:2489px;top:1254px;width:934px;height:1px;background:#c0c0c0;"></div>
<div style="left:2489px;top:1281px;width:934px;height:1px;background:#c0c0c0;"></div>
<div style="left:2489px;top:1308px;width:934px;height:1px;background:#c0c0c0;"></div>
<div style="left:2489px;top:1335px;width:934px;height:1px;background:#c0c0c0;"></div>
<div style="left:2595px;top:525px;width:1px;height:837px;background:#c0c0c0;"></div>
<div style="left:2708px;top:525px;width:1px;height:837px;background:#c0c0c0;"></div>
<div style="left:2863px;top:525px;width:1px;height:837px;background:#c0c0c0;"></div>
<div style="left:3008px;top:525px;width:1px;height:837px;background:#c0c0c0;"></div>
<div style="left:3153px;top:525px;width:1px;height:837px;background:#c0c0c0;"></div>
<div style="left:3243px;top:525px;width:1px;height:837px;background:#c0c0c0;"></div>
<div style="left:3333px;top:525px;width:1px;height:837px;background:#c0c0c0;"></div>
<div style="left:3431px;top:552px;width:371px;height:1px;background:#c0c0c0;"></div>
<div style="left:3431px;top:579px;width:371px;height:1px;background:#c0c0c0;"></div>
<div style="left:3431px;top:606px;width:371px;height:1px;background:#c0c0c0;"></div>
<div style="left:3431px;top:633px;width:371px;height:1px;background:#c0c0c0;"></div>
<div style="left:3431px;top:660px;width:371px;height:1px;background:#c0c0c0;"></div>
<div style="left:3431px;top:687px;width:371px;height:1px;background:#c0c0c0;"></div>
<div style="left:3431px;top:714px;width:371px;height:1px;background:#c0c0c0;"></div>
<div style="left:3431px;top:741px;width:371px;height:1px;background:#c0c0c0;"></div>
<div style="left:3431px;top:768px;width:371px;height:1px;background:#c0c0c0;"></div>
<div style="left:3431px;top:795px;width:371px;height:1px;background:#c0c0c0;"></div>
<div style="left:3431px;top:822px;width:371px;height:1px;background:#c0c0c0;"></div>
<div style="left:3431px;top:849px;width:371px;height:1px;background:#c0c0c0;"></div>
<div style="left:3431px;top:876px;width:371px;height:1px;background:#c0c0c0;"></div>
<div style="left:3431px;top:903px;width:371px;height:1px;background:#c0c0c0;"></div>
<div style="left:3431px;top:930px;width:371px;height:1px;background:#c0c0c0;"></div>
<div style="left:3431px;top:957px;width:371px;height:1px;background:#c0c0c0;"></div>
<div style="left:3431px;top:984px;width:371px;height:1px;background:#c0c0c0;"></div>
<div style="left:3431px;top:1011px;width:371px;height:1px;background:#c0c0c0;"></div>
<div style="left:3431px;top:1038px;width:371px;height:1px;background:#c0c0c0;"></div>
<div style="left:3431px;top:1065px;width:371px;height:1px;background:#c0c0c0;"></div>
<div style="left:3431px;top:1092px;width:371px;height:1px;background:#c0c0c0;"></div>
<div style="left:3431px;top:1119px;width:371px;height:1px;background:#c0c0c0;"></div>
<div style="left:3431px;top:1146px;width:371px;height:1px;background:#c0c0c0;"></div>
<div style="left:3431px;top:1173px;width:371px;height:1px;background:#c0c0c0;"></div>
<div style="left:3431px;top:1200px;width:371px;height:1px;background:#c0c0c0;"></div>
<div style="left:3431px;top:1227px;width:371px;height:1px;background:#c0c0c0;"></div>
<div style="left:3431px;top:1254px;width:371px;height:1px;background:#c0c0c0;"></div>
<div style="left:3431px;top:1281px;width:371px;height:1px;background:#c0c0c0;"></div>
<div style="left:3431px;top:1308px;width:371px;height:1px;background:#c0c0c0;"></div>
<div style="left:3431px;top:1335px;width:371px;height:1px;background:#c0c0c0;"></div>
<div style="left:3537px;top:525px;width:1px;height:837px;background:#c0c0c0;"></div>
<div style="left:3650px;top:525px;width:1px;height:837px;background:#c0c0c0;"></div>
<div style="left:141px;top:324px;width:2341px;height:1px;background:#000;"></div>
<div style="left:2489px;top:324px;width:1313px;height:1px;background:#000;"></div>
<div style="left:141px;top:363px;width:2341px;height:1px;background:#000;"></div>
<div style="left:2489px;top:363px;width:1313px;height:1px;background:#000;"></div>
<div style="left:141px;top:324px;width:1px;height:1039px;background:#000;"></div>
<div style="left:2481px;top:324px;width:1px;height:1067px;background:#000;"></div>
<div style="left:2489px;top:324px;width:1px;height:1067px;background:#000;"></div>
<div style="left:141px;top:498px;width:1132px;height:1px;background:#000;"></div>
<div style="left:141px;top:525px;width:1132px;height:1px;background:#000;"></div>
<div style="left:1280px;top:498px;width:1202px;height:1px;background:#000;"></div>
<div style="left:1280px;top:525px;width:1202px;height:1px;background:#000;"></div>
<div style="left:2489px;top:498px;width:935px;height:1px;background:#000;"></div>
<div style="left:2489px;top:525px;width:935px;height:1px;background:#000;"></div>
<div style="left:3431px;top:498px;width:371px;height:1px;background:#000;"></div>
<div style="left:3431px;top:525px;width:371px;height:1px;background:#000;"></div>
<div style="left:1272px;top:498px;width:1px;height:893px;background:#000;"></div>
<div style="left:1280px;top:498px;width:1px;height:893px;background:#000;"></div>
<div style="left:3423px;top:498px;width:1px;height:893px;background:#000;"></div>
<div style="left:3431px;top:498px;width:1px;height:893px;background:#000;"></div>
<div style="left:2217px;top:498px;width:1px;height:893px;background:#000;"></div>
<div style="left:141px;top:1362px;width:1132px;height:1px;background:#000;"></div>
<div style="left:1280px;top:1362px;width:1202px;height:1px;background:#000;"></div>
<div style="left:2489px;top:1362px;width:935px;height:1px;background:#000;"></div>
<div style="left:3431px;top:1362px;width:371px;height:1px;background:#000;"></div>
<div style="left:338px;top:1388px;width:935px;height:1px;background:#000;"></div>
<div style="left:338px;top:1390px;width:935px;height:1px;background:#000;"></div>
<div style="left:1280px;top:1388px;width:1202px;height:1px;background:#000;"></div>
<div style="left:1280px;top:1390px;width:1202px;height:1px;background:#000;"></div>
<div style="left:2489px;top:1388px;width:935px;height:1px;background:#000;"></div>
<div style="left:2489px;top:1390px;width:935px;height:1px;background:#000;"></div>
<div style="left:3431px;top:1388px;width:371px;height:1px;background:#000;"></div>
<div style="left:3431px;top:1390px;width:371px;height:1px;background:#000;"></div>
<div style="left:141px;top:1416px;width:2341px;height:1px;background:#000;"></div>
<div style="left:2489px;top:1416px;width:1313px;height:1px;background:#000;"></div>
<div style="left:141px;top:1416px;width:1px;height:556px;background:#000;"></div>
<div style="left:2481px;top:1416px;width:1px;height:556px;background:#000;"></div>
<div style="left:2489px;top:1416px;width:1px;height:556px;background:#000;"></div>
<div style="left:144px;top:1497px;width:2336px;height:1px;background:repeating-linear-gradient(90deg,#000 0 2px,transparent 2px 4px)"></div>
<div style="left:2492px;top:1497px;width:1310px;height:1px;background:repeating-linear-gradient(90deg,#000 0 2px,transparent 2px 4px)"></div>
<div style="left:144px;top:1713px;width:2336px;height:1px;background:repeating-linear-gradient(90deg,#000 0 2px,transparent 2px 4px)"></div>
<div style="left:2492px;top:1713px;width:1310px;height:1px;background:repeating-linear-gradient(90deg,#000 0 2px,transparent 2px 4px)"></div>
<div style="left:144px;top:1848px;width:2336px;height:1px;background:repeating-linear-gradient(90deg,#000 0 2px,transparent 2px 4px)"></div>
<div style="left:2492px;top:1848px;width:1310px;height:1px;background:repeating-linear-gradient(90deg,#000 0 2px,transparent 2px 4px)"></div>
<div class="t" style="left:145px;top:339px;font-size:20px;line-height:20px;font-weight:normal;color:#000;"><span style="display:inline-block;transform:scaleX(0.943);transform-origin:left">Series Name</span></div>
<div class="t" style="left:145px;top:368px;font-size:20px;line-height:20px;font-weight:normal;color:#000;"><span style="display:inline-block;transform:scaleX(0.943);transform-origin:left">Original Par Amount</span></div>
<div class="t" style="left:145px;top:395px;font-size:20px;line-height:20px;font-weight:normal;color:#000;"><span style="display:inline-block;transform:scaleX(0.943);transform-origin:left">Issuer Name</span></div>
<div class="t" style="left:145px;top:422px;font-size:20px;line-height:20px;font-weight:normal;color:#000;"><span style="display:inline-block;transform:scaleX(0.943);transform-origin:left">Obligor</span></div>
<div class="t" style="left:145px;top:449px;font-size:20px;line-height:20px;font-weight:normal;color:#000;"><span style="display:inline-block;transform:scaleX(0.943);transform-origin:left">Tax Status</span></div>
<div class="t" style="left:145px;top:476px;font-size:20px;line-height:20px;font-weight:normal;color:#000;"><span style="display:inline-block;transform:scaleX(0.943);transform-origin:left">Description</span></div>
<div class="t" style="left:145px;top:1421px;width:193px;overflow:hidden;font-size:20px;line-height:20px;color:#000"><span style="display:inline-block;transform:scaleX(0.943);transform-origin:left">Outstanding Par</span></div>
<div class="t" style="left:145px;top:1448px;width:193px;overflow:hidden;font-size:20px;line-height:20px;color:#000"><span style="display:inline-block;transform:scaleX(0.943);transform-origin:left">Series Par</span></div>
<div class="t" style="left:145px;top:1475px;width:193px;overflow:hidden;font-size:20px;line-height:20px;color:#000"><span style="display:inline-block;transform:scaleX(0.943);transform-origin:left">Denominations</span></div>
<div class="t" style="left:145px;top:1502px;width:193px;overflow:hidden;font-size:20px;line-height:20px;color:#000"><span style="display:inline-block;transform:scaleX(0.943);transform-origin:left">Raw Description</span></div>
<div class="t" style="left:145px;top:1529px;width:193px;overflow:hidden;font-size:20px;line-height:20px;color:#000"><span style="display:inline-block;transform:scaleX(0.943);transform-origin:left">Refunding or New Money</span></div>
<div class="t" style="left:145px;top:1556px;width:193px;overflow:hidden;font-size:20px;line-height:20px;color:#000"><span style="display:inline-block;transform:scaleX(0.943);transform-origin:left">Use of Funds</span></div>
<div class="t" style="left:145px;top:1583px;width:193px;overflow:hidden;font-size:20px;line-height:20px;color:#000"><span style="display:inline-block;transform:scaleX(0.943);transform-origin:left">Federal Tax</span></div>
<div class="t" style="left:145px;top:1610px;width:193px;overflow:hidden;font-size:20px;line-height:20px;color:#000"><span style="display:inline-block;transform:scaleX(0.943);transform-origin:left">AMT</span></div>
<div class="t" style="left:145px;top:1637px;width:193px;overflow:hidden;font-size:20px;line-height:20px;color:#000"><span style="display:inline-block;transform:scaleX(0.943);transform-origin:left">State Tax</span></div>
<div class="t" style="left:145px;top:1664px;width:193px;overflow:hidden;font-size:20px;line-height:20px;color:#000"><span style="display:inline-block;transform:scaleX(0.943);transform-origin:left">Variable Mode</span></div>
<div class="t" style="left:145px;top:1691px;width:193px;overflow:hidden;font-size:20px;line-height:20px;color:#000"><span style="display:inline-block;transform:scaleX(0.943);transform-origin:left">BABs</span></div>
<div class="t" style="left:145px;top:1718px;width:193px;overflow:hidden;font-size:20px;line-height:20px;color:#000"><span style="display:inline-block;transform:scaleX(0.943);transform-origin:left">Sale Date</span></div>
<div class="t" style="left:145px;top:1745px;width:193px;overflow:hidden;font-size:20px;line-height:20px;color:#000"><span style="display:inline-block;transform:scaleX(0.943);transform-origin:left">Dated Date</span></div>
<div class="t" style="left:145px;top:1772px;width:193px;overflow:hidden;font-size:20px;line-height:20px;color:#000"><span style="display:inline-block;transform:scaleX(0.943);transform-origin:left">Delivery Date</span></div>
<div class="t" style="left:145px;top:1799px;width:193px;overflow:hidden;font-size:20px;line-height:20px;color:#000"><span style="display:inline-block;transform:scaleX(0.943);transform-origin:left">First Coupon Date</span></div>
<div class="t" style="left:145px;top:1826px;width:193px;overflow:hidden;font-size:20px;line-height:20px;color:#000"><span style="display:inline-block;transform:scaleX(0.943);transform-origin:left">Final Maturity</span></div>
<div class="t" style="left:145px;top:1853px;width:193px;overflow:hidden;font-size:20px;line-height:20px;color:#000"><span style="display:inline-block;transform:scaleX(0.943);transform-origin:left">MWC Spread</span></div>
<div class="t" style="left:145px;top:1880px;width:193px;overflow:hidden;font-size:20px;line-height:20px;color:#000"><span style="display:inline-block;transform:scaleX(0.943);transform-origin:left">MWC Benchmark</span></div>
<div class="t" style="left:145px;top:1907px;width:193px;overflow:hidden;font-size:20px;line-height:20px;color:#000"><span style="display:inline-block;transform:scaleX(0.943);transform-origin:left">SBPA</span></div>
<div class="t" style="left:145px;top:1934px;width:193px;overflow:hidden;font-size:20px;line-height:20px;color:#000"><span style="display:inline-block;transform:scaleX(0.943);transform-origin:left">LOC</span></div>
<div class="t" style="left:145px;top:1961px;width:193px;overflow:hidden;font-size:20px;line-height:20px;color:#000"><span style="display:inline-block;transform:scaleX(0.943);transform-origin:left">LOC</span></div>
<div class="t" style="left:-160.5px;width:800px;top:503px;font-size:20px;line-height:20px;font-weight:bold;color:#fff;text-align:center;"><span style="display:inline-block;transform:scaleX(0.965);transform-origin:center">Year</span></div>
<div class="t" style="left:-9.0px;width:800px;top:503px;font-size:20px;line-height:20px;font-weight:bold;color:#fff;text-align:center;"><span style="display:inline-block;transform:scaleX(0.965);transform-origin:center">Maturity</span></div>
<div class="t" style="left:100.5px;width:800px;top:503px;font-size:20px;line-height:20px;font-weight:bold;color:#fff;text-align:center;"><span style="display:inline-block;transform:scaleX(0.965);transform-origin:center">CUSIP</span></div>
<div class="t" style="left:234.5px;width:800px;top:503px;font-size:20px;line-height:20px;font-weight:bold;color:#fff;text-align:center;"><span style="display:inline-block;transform:scaleX(0.965);transform-origin:center">Original Par</span></div>
<div class="t" style="left:384.5px;width:800px;top:503px;font-size:20px;line-height:20px;font-weight:bold;color:#fff;text-align:center;"><span style="display:inline-block;transform:scaleX(0.965);transform-origin:center">Original Amort</span></div>
<div class="t" style="left:529.5px;width:800px;top:503px;font-size:20px;line-height:20px;font-weight:bold;color:#fff;text-align:center;"><span style="display:inline-block;transform:scaleX(0.965);transform-origin:center">Current Par</span></div>
<div class="t" style="left:647.0px;width:800px;top:503px;font-size:20px;line-height:20px;font-weight:bold;color:#fff;text-align:center;"><span style="display:inline-block;transform:scaleX(0.965);transform-origin:center">Coupon</span></div>
<div class="t" style="left:737.0px;width:800px;top:503px;font-size:20px;line-height:20px;font-weight:bold;color:#fff;text-align:center;"><span style="display:inline-block;transform:scaleX(0.965);transform-origin:center">Yield</span></div>
<div class="t" style="left:827.0px;width:800px;top:503px;font-size:20px;line-height:20px;font-weight:bold;color:#fff;text-align:center;"><span style="display:inline-block;transform:scaleX(0.965);transform-origin:center">Call Date</span></div>
<div class="t" style="left:933.0px;width:800px;top:503px;font-size:20px;line-height:20px;font-weight:bold;color:#fff;text-align:center;"><span style="display:inline-block;transform:scaleX(0.965);transform-origin:center">Maturity</span></div>
<div class="t" style="left:1042.5px;width:800px;top:503px;font-size:20px;line-height:20px;font-weight:bold;color:#fff;text-align:center;"><span style="display:inline-block;transform:scaleX(0.965);transform-origin:center">CUSIP</span></div>
<div class="t" style="left:1178.0px;width:800px;top:503px;font-size:20px;line-height:20px;font-weight:bold;color:#fff;text-align:center;"><span style="display:inline-block;transform:scaleX(0.965);transform-origin:center">Original Par</span></div>
<div class="t" style="left:1329.5px;width:800px;top:503px;font-size:20px;line-height:20px;font-weight:bold;color:#fff;text-align:center;"><span style="display:inline-block;transform:scaleX(0.965);transform-origin:center">Original Amort</span></div>
<div class="t" style="left:1474.5px;width:800px;top:503px;font-size:20px;line-height:20px;font-weight:bold;color:#fff;text-align:center;"><span style="display:inline-block;transform:scaleX(0.965);transform-origin:center">Current Par</span></div>
<div class="t" style="left:1592.0px;width:800px;top:503px;font-size:20px;line-height:20px;font-weight:bold;color:#fff;text-align:center;"><span style="display:inline-block;transform:scaleX(0.965);transform-origin:center">Coupon</span></div>
<div class="t" style="left:1682.0px;width:800px;top:503px;font-size:20px;line-height:20px;font-weight:bold;color:#fff;text-align:center;"><span style="display:inline-block;transform:scaleX(0.965);transform-origin:center">Yield</span></div>
<div class="t" style="left:1772.0px;width:800px;top:503px;font-size:20px;line-height:20px;font-weight:bold;color:#fff;text-align:center;"><span style="display:inline-block;transform:scaleX(0.965);transform-origin:center">Call Date</span></div>
<div class="t" style="left:1883.0px;width:800px;top:503px;font-size:20px;line-height:20px;font-weight:bold;color:#fff;text-align:center;"><span style="display:inline-block;transform:scaleX(0.965);transform-origin:center">Interest</span></div>
<div class="t" style="left:2015.0px;width:800px;top:503px;font-size:20px;line-height:20px;font-weight:bold;color:#fff;text-align:center;"><span style="display:inline-block;transform:scaleX(0.965);transform-origin:center">Debt Service</span></div>
<div class="t" style="left:2142.0px;width:800px;top:503px;font-size:20px;line-height:20px;font-weight:bold;color:#fff;text-align:center;"><span style="display:inline-block;transform:scaleX(0.965);transform-origin:center">Maturity</span></div>
<div class="t" style="left:2251.5px;width:800px;top:503px;font-size:20px;line-height:20px;font-weight:bold;color:#fff;text-align:center;"><span style="display:inline-block;transform:scaleX(0.965);transform-origin:center">CUSIP</span></div>
<div class="t" style="left:2385.5px;width:800px;top:503px;font-size:20px;line-height:20px;font-weight:bold;color:#fff;text-align:center;"><span style="display:inline-block;transform:scaleX(0.965);transform-origin:center">Original Par</span></div>
<div class="t" style="left:2535.5px;width:800px;top:503px;font-size:20px;line-height:20px;font-weight:bold;color:#fff;text-align:center;"><span style="display:inline-block;transform:scaleX(0.965);transform-origin:center">Original Amort</span></div>
<div class="t" style="left:2680.5px;width:800px;top:503px;font-size:20px;line-height:20px;font-weight:bold;color:#fff;text-align:center;"><span style="display:inline-block;transform:scaleX(0.965);transform-origin:center">Current Par</span></div>
<div class="t" style="left:2798.0px;width:800px;top:503px;font-size:20px;line-height:20px;font-weight:bold;color:#fff;text-align:center;"><span style="display:inline-block;transform:scaleX(0.965);transform-origin:center">Coupon</span></div>
<div class="t" style="left:2888.0px;width:800px;top:503px;font-size:20px;line-height:20px;font-weight:bold;color:#fff;text-align:center;"><span style="display:inline-block;transform:scaleX(0.965);transform-origin:center">Yield</span></div>
<div class="t" style="left:2978.0px;width:800px;top:503px;font-size:20px;line-height:20px;font-weight:bold;color:#fff;text-align:center;"><span style="display:inline-block;transform:scaleX(0.965);transform-origin:center">Call Date</span></div>
<div class="t" style="left:3084.0px;width:800px;top:503px;font-size:20px;line-height:20px;font-weight:bold;color:#fff;text-align:center;"><span style="display:inline-block;transform:scaleX(0.965);transform-origin:center">Maturity</span></div>
<div class="t" style="left:3193.5px;width:800px;top:503px;font-size:20px;line-height:20px;font-weight:bold;color:#fff;text-align:center;"><span style="display:inline-block;transform:scaleX(0.965);transform-origin:center">CUSIP</span></div>
<div class="t" style="left:3329.0px;width:800px;top:503px;font-size:20px;line-height:20px;font-weight:bold;color:#fff;text-align:center;"><span style="display:inline-block;transform:scaleX(0.965);transform-origin:center">Original Par</span></div>
<div class="t" style="right:3504px;top:530px;font-size:20px;line-height:20px;font-weight:normal;color:#000;text-align:right;"><span style="display:inline-block;transform:scaleX(0.99);transform-origin:right">2018</span></div>
<div class="t" style="right:3504px;top:557px;font-size:20px;line-height:20px;font-weight:normal;color:#000;text-align:right;"><span style="display:inline-block;transform:scaleX(0.99);transform-origin:right">2019</span></div>
<div class="t" style="right:3504px;top:584px;font-size:20px;line-height:20px;font-weight:normal;color:#000;text-align:right;"><span style="display:inline-block;transform:scaleX(0.99);transform-origin:right">2020</span></div>
<div class="t" style="right:3504px;top:611px;font-size:20px;line-height:20px;font-weight:normal;color:#000;text-align:right;"><span style="display:inline-block;transform:scaleX(0.99);transform-origin:right">2021</span></div>
<div class="t" style="right:3504px;top:638px;font-size:20px;line-height:20px;font-weight:normal;color:#000;text-align:right;"><span style="display:inline-block;transform:scaleX(0.99);transform-origin:right">2022</span></div>
<div class="t" style="right:3504px;top:665px;font-size:20px;line-height:20px;font-weight:normal;color:#000;text-align:right;"><span style="display:inline-block;transform:scaleX(0.99);transform-origin:right">2023</span></div>
<div class="t" style="right:3504px;top:692px;font-size:20px;line-height:20px;font-weight:normal;color:#000;text-align:right;"><span style="display:inline-block;transform:scaleX(0.99);transform-origin:right">2024</span></div>
<div class="t" style="right:3504px;top:719px;font-size:20px;line-height:20px;font-weight:normal;color:#000;text-align:right;"><span style="display:inline-block;transform:scaleX(0.99);transform-origin:right">2025</span></div>
<div class="t" style="right:3504px;top:746px;font-size:20px;line-height:20px;font-weight:normal;color:#000;text-align:right;"><span style="display:inline-block;transform:scaleX(0.99);transform-origin:right">2026</span></div>
<div class="t" style="right:3504px;top:773px;font-size:20px;line-height:20px;font-weight:normal;color:#000;text-align:right;"><span style="display:inline-block;transform:scaleX(0.99);transform-origin:right">2027</span></div>
<div class="t" style="right:3504px;top:800px;font-size:20px;line-height:20px;font-weight:normal;color:#000;text-align:right;"><span style="display:inline-block;transform:scaleX(0.99);transform-origin:right">2028</span></div>
<div class="t" style="right:3504px;top:827px;font-size:20px;line-height:20px;font-weight:normal;color:#000;text-align:right;"><span style="display:inline-block;transform:scaleX(0.99);transform-origin:right">2029</span></div>
<div class="t" style="right:3504px;top:854px;font-size:20px;line-height:20px;font-weight:normal;color:#000;text-align:right;"><span style="display:inline-block;transform:scaleX(0.99);transform-origin:right">2030</span></div>
<div class="t" style="right:3504px;top:881px;font-size:20px;line-height:20px;font-weight:normal;color:#000;text-align:right;"><span style="display:inline-block;transform:scaleX(0.99);transform-origin:right">2031</span></div>
<div class="t" style="right:3504px;top:908px;font-size:20px;line-height:20px;font-weight:normal;color:#000;text-align:right;"><span style="display:inline-block;transform:scaleX(0.99);transform-origin:right">2032</span></div>
<div class="t" style="right:3504px;top:935px;font-size:20px;line-height:20px;font-weight:normal;color:#000;text-align:right;"><span style="display:inline-block;transform:scaleX(0.99);transform-origin:right">2033</span></div>
<div class="t" style="right:3504px;top:962px;font-size:20px;line-height:20px;font-weight:normal;color:#000;text-align:right;"><span style="display:inline-block;transform:scaleX(0.99);transform-origin:right">2034</span></div>
<div class="t" style="right:3504px;top:989px;font-size:20px;line-height:20px;font-weight:normal;color:#000;text-align:right;"><span style="display:inline-block;transform:scaleX(0.99);transform-origin:right">2035</span></div>
<div class="t" style="right:3504px;top:1016px;font-size:20px;line-height:20px;font-weight:normal;color:#000;text-align:right;"><span style="display:inline-block;transform:scaleX(0.99);transform-origin:right">2036</span></div>
<div class="t" style="right:3504px;top:1043px;font-size:20px;line-height:20px;font-weight:normal;color:#000;text-align:right;"><span style="display:inline-block;transform:scaleX(0.99);transform-origin:right">2037</span></div>
<div class="t" style="right:3504px;top:1070px;font-size:20px;line-height:20px;font-weight:normal;color:#000;text-align:right;"><span style="display:inline-block;transform:scaleX(0.99);transform-origin:right">2038</span></div>
<div class="t" style="right:3504px;top:1097px;font-size:20px;line-height:20px;font-weight:normal;color:#000;text-align:right;"><span style="display:inline-block;transform:scaleX(0.99);transform-origin:right">2039</span></div>
<div class="t" style="right:3504px;top:1124px;font-size:20px;line-height:20px;font-weight:normal;color:#000;text-align:right;"><span style="display:inline-block;transform:scaleX(0.99);transform-origin:right">2040</span></div>
<div class="t" style="right:3504px;top:1151px;font-size:20px;line-height:20px;font-weight:normal;color:#000;text-align:right;"><span style="display:inline-block;transform:scaleX(0.99);transform-origin:right">2041</span></div>
<div class="t" style="right:3504px;top:1178px;font-size:20px;line-height:20px;font-weight:normal;color:#000;text-align:right;"><span style="display:inline-block;transform:scaleX(0.99);transform-origin:right">2042</span></div>
<div class="t" style="right:3504px;top:1205px;font-size:20px;line-height:20px;font-weight:normal;color:#000;text-align:right;"><span style="display:inline-block;transform:scaleX(0.99);transform-origin:right">2043</span></div>
<div class="t" style="right:3504px;top:1232px;font-size:20px;line-height:20px;font-weight:normal;color:#000;text-align:right;"><span style="display:inline-block;transform:scaleX(0.99);transform-origin:right">2044</span></div>
<div class="t" style="right:3504px;top:1259px;font-size:20px;line-height:20px;font-weight:normal;color:#000;text-align:right;"><span style="display:inline-block;transform:scaleX(0.99);transform-origin:right">2045</span></div>
<div class="t" style="right:3504px;top:1286px;font-size:20px;line-height:20px;font-weight:normal;color:#000;text-align:right;"><span style="display:inline-block;transform:scaleX(0.99);transform-origin:right">2046</span></div>
<div class="t" style="right:3504px;top:1313px;font-size:20px;line-height:20px;font-weight:normal;color:#000;text-align:right;"><span style="display:inline-block;transform:scaleX(0.99);transform-origin:right">2047</span></div>
<div class="t" style="right:3504px;top:1340px;font-size:20px;line-height:20px;font-weight:normal;color:#000;text-align:right;"><span style="display:inline-block;transform:scaleX(0.99);transform-origin:right">2048</span></div>
<div class="t" style="right:3397px;top:557px;font-size:20px;line-height:20px;font-weight:normal;color:#000;text-align:right;"><span style="display:inline-block;transform:scaleX(0.98);transform-origin:right">9/1/2019</span></div>
<div class="t" style="left:448px;top:557px;font-size:20px;line-height:20px;font-weight:normal;color:#000;"><span style="display:inline-block;transform:scaleX(0.972);transform-origin:left">5426905B4</span></div>
<div class="t" style="right:3135px;top:557px;font-size:20px;line-height:20px;font-weight:normal;color:#000;text-align:right;"><span style="display:inline-block;transform:scaleX(0.99);transform-origin:right">1,800,000</span></div>
<div class="t" style="right:2845px;top:557px;font-size:20px;line-height:20px;font-weight:normal;color:#000;text-align:right;"><span style="display:inline-block;transform:scaleX(0.99);transform-origin:right">1,800,000</span></div>
<div class="t" style="right:2749px;top:557px;font-size:20px;line-height:20px;font-weight:normal;color:#000;text-align:right;"><span style="display:inline-block;transform:scaleX(0.99);transform-origin:right">5.000%</span></div>
<div class="t" style="right:2659px;top:557px;font-size:20px;line-height:20px;font-weight:normal;color:#000;text-align:right;"><span style="display:inline-block;transform:scaleX(0.99);transform-origin:right">1.360%</span></div>
<div class="t" style="right:3397px;top:584px;font-size:20px;line-height:20px;font-weight:normal;color:#000;text-align:right;"><span style="display:inline-block;transform:scaleX(0.98);transform-origin:right">9/1/2020</span></div>
<div class="t" style="left:448px;top:584px;font-size:20px;line-height:20px;font-weight:normal;color:#000;"><span style="display:inline-block;transform:scaleX(0.972);transform-origin:left">5426905C2</span></div>
<div class="t" style="right:3135px;top:584px;font-size:20px;line-height:20px;font-weight:normal;color:#000;text-align:right;"><span style="display:inline-block;transform:scaleX(0.99);transform-origin:right">2,145,000</span></div>
<div class="t" style="right:2845px;top:584px;font-size:20px;line-height:20px;font-weight:normal;color:#000;text-align:right;"><span style="display:inline-block;transform:scaleX(0.99);transform-origin:right">2,145,000</span></div>
<div class="t" style="right:2749px;top:584px;font-size:20px;line-height:20px;font-weight:normal;color:#000;text-align:right;"><span style="display:inline-block;transform:scaleX(0.99);transform-origin:right">5.000%</span></div>
<div class="t" style="right:2659px;top:584px;font-size:20px;line-height:20px;font-weight:normal;color:#000;text-align:right;"><span style="display:inline-block;transform:scaleX(0.99);transform-origin:right">1.620%</span></div>
<div class="t" style="right:3397px;top:611px;font-size:20px;line-height:20px;font-weight:normal;color:#000;text-align:right;"><span style="display:inline-block;transform:scaleX(0.98);transform-origin:right">9/1/2021</span></div>
<div class="t" style="left:448px;top:611px;font-size:20px;line-height:20px;font-weight:normal;color:#000;"><span style="display:inline-block;transform:scaleX(0.972);transform-origin:left">5426905D0</span></div>
<div class="t" style="right:3135px;top:611px;font-size:20px;line-height:20px;font-weight:normal;color:#000;text-align:right;"><span style="display:inline-block;transform:scaleX(0.99);transform-origin:right">2,295,000</span></div>
<div class="t" style="right:2845px;top:611px;font-size:20px;line-height:20px;font-weight:normal;color:#000;text-align:right;"><span style="display:inline-block;transform:scaleX(0.99);transform-origin:right">2,295,000</span></div>
<div class="t" style="right:2749px;top:611px;font-size:20px;line-height:20px;font-weight:normal;color:#000;text-align:right;"><span style="display:inline-block;transform:scaleX(0.99);transform-origin:right">5.000%</span></div>
<div class="t" style="right:2659px;top:611px;font-size:20px;line-height:20px;font-weight:normal;color:#000;text-align:right;"><span style="display:inline-block;transform:scaleX(0.99);transform-origin:right">1.880%</span></div>
<div class="t" style="right:3397px;top:638px;font-size:20px;line-height:20px;font-weight:normal;color:#000;text-align:right;"><span style="display:inline-block;transform:scaleX(0.98);transform-origin:right">9/1/2022</span></div>
<div class="t" style="left:448px;top:638px;font-size:20px;line-height:20px;font-weight:normal;color:#000;"><span style="display:inline-block;transform:scaleX(0.972);transform-origin:left">5426905E8</span></div>
<div class="t" style="right:3135px;top:638px;font-size:20px;line-height:20px;font-weight:normal;color:#000;text-align:right;"><span style="display:inline-block;transform:scaleX(0.99);transform-origin:right">2,395,000</span></div>
<div class="t" style="right:2845px;top:638px;font-size:20px;line-height:20px;font-weight:normal;color:#000;text-align:right;"><span style="display:inline-block;transform:scaleX(0.99);transform-origin:right">2,395,000</span></div>
<div class="t" style="right:2749px;top:638px;font-size:20px;line-height:20px;font-weight:normal;color:#000;text-align:right;"><span style="display:inline-block;transform:scaleX(0.99);transform-origin:right">5.000%</span></div>
<div class="t" style="right:2659px;top:638px;font-size:20px;line-height:20px;font-weight:normal;color:#000;text-align:right;"><span style="display:inline-block;transform:scaleX(0.99);transform-origin:right">2.100%</span></div>
<div class="t" style="right:3397px;top:665px;font-size:20px;line-height:20px;font-weight:normal;color:#000;text-align:right;"><span style="display:inline-block;transform:scaleX(0.98);transform-origin:right">9/1/2023</span></div>
<div class="t" style="left:448px;top:665px;font-size:20px;line-height:20px;font-weight:normal;color:#000;"><span style="display:inline-block;transform:scaleX(0.972);transform-origin:left">5426904Q2</span></div>
<div class="t" style="right:3135px;top:665px;font-size:20px;line-height:20px;font-weight:normal;color:#000;text-align:right;"><span style="display:inline-block;transform:scaleX(0.99);transform-origin:right">2,635,000</span></div>
<div class="t" style="right:2845px;top:665px;font-size:20px;line-height:20px;font-weight:normal;color:#000;text-align:right;"><span style="display:inline-block;transform:scaleX(0.99);transform-origin:right">2,635,000</span></div>
<div class="t" style="right:2749px;top:665px;font-size:20px;line-height:20px;font-weight:normal;color:#000;text-align:right;"><span style="display:inline-block;transform:scaleX(0.99);transform-origin:right">5.000%</span></div>
<div class="t" style="right:2659px;top:665px;font-size:20px;line-height:20px;font-weight:normal;color:#000;text-align:right;"><span style="display:inline-block;transform:scaleX(0.99);transform-origin:right">2.330%</span></div>
<div class="t" style="right:3397px;top:692px;font-size:20px;line-height:20px;font-weight:normal;color:#000;text-align:right;"><span style="display:inline-block;transform:scaleX(0.98);transform-origin:right">9/1/2024</span></div>
<div class="t" style="left:448px;top:692px;font-size:20px;line-height:20px;font-weight:normal;color:#000;"><span style="display:inline-block;transform:scaleX(0.972);transform-origin:left">5426904R0</span></div>
<div class="t" style="right:3135px;top:692px;font-size:20px;line-height:20px;font-weight:normal;color:#000;text-align:right;"><span style="display:inline-block;transform:scaleX(0.99);transform-origin:right">2,770,000</span></div>
<div class="t" style="right:2845px;top:692px;font-size:20px;line-height:20px;font-weight:normal;color:#000;text-align:right;"><span style="display:inline-block;transform:scaleX(0.99);transform-origin:right">2,770,000</span></div>
<div class="t" style="right:2749px;top:692px;font-size:20px;line-height:20px;font-weight:normal;color:#000;text-align:right;"><span style="display:inline-block;transform:scaleX(0.99);transform-origin:right">5.000%</span></div>
<div class="t" style="right:2659px;top:692px;font-size:20px;line-height:20px;font-weight:normal;color:#000;text-align:right;"><span style="display:inline-block;transform:scaleX(0.99);transform-origin:right">2.530%</span></div>
<div class="t" style="right:3397px;top:719px;font-size:20px;line-height:20px;font-weight:normal;color:#000;text-align:right;"><span style="display:inline-block;transform:scaleX(0.98);transform-origin:right">9/1/2025</span></div>
<div class="t" style="left:448px;top:719px;font-size:20px;line-height:20px;font-weight:normal;color:#000;"><span style="display:inline-block;transform:scaleX(0.972);transform-origin:left">5426905F5</span></div>
<div class="t" style="right:3135px;top:719px;font-size:20px;line-height:20px;font-weight:normal;color:#000;text-align:right;"><span style="display:inline-block;transform:scaleX(0.99);transform-origin:right">1,860,000</span></div>
<div class="t" style="right:2845px;top:719px;font-size:20px;line-height:20px;font-weight:normal;color:#000;text-align:right;"><span style="display:inline-block;transform:scaleX(0.99);transform-origin:right">1,860,000</span></div>
<div class="t" style="right:2749px;top:719px;font-size:20px;line-height:20px;font-weight:normal;color:#000;text-align:right;"><span style="display:inline-block;transform:scaleX(0.99);transform-origin:right">5.000%</span></div>
<div class="t" style="right:2659px;top:719px;font-size:20px;line-height:20px;font-weight:normal;color:#000;text-align:right;"><span style="display:inline-block;transform:scaleX(0.99);transform-origin:right">2.690%</span></div>
<div class="t" style="right:3397px;top:746px;font-size:20px;line-height:20px;font-weight:normal;color:#000;text-align:right;"><span style="display:inline-block;transform:scaleX(0.98);transform-origin:right">9/1/2026</span></div>
<div class="t" style="left:448px;top:746px;font-size:20px;line-height:20px;font-weight:normal;color:#000;"><span style="display:inline-block;transform:scaleX(0.972);transform-origin:left">5426904T6</span></div>
<div class="t" style="right:3135px;top:746px;font-size:20px;line-height:20px;font-weight:normal;color:#000;text-align:right;"><span style="display:inline-block;transform:scaleX(0.99);transform-origin:right">3,030,000</span></div>
<div class="t" style="right:2845px;top:746px;font-size:20px;line-height:20px;font-weight:normal;color:#000;text-align:right;"><span style="display:inline-block;transform:scaleX(0.99);transform-origin:right">3,030,000</span></div>
<div class="t" style="right:2749px;top:746px;font-size:20px;line-height:20px;font-weight:normal;color:#000;text-align:right;"><span style="display:inline-block;transform:scaleX(0.99);transform-origin:right">5.000%</span></div>
<div class="t" style="right:2659px;top:746px;font-size:20px;line-height:20px;font-weight:normal;color:#000;text-align:right;"><span style="display:inline-block;transform:scaleX(0.99);transform-origin:right">2.870%</span></div>
<div class="t" style="right:2569px;top:746px;font-size:20px;line-height:20px;font-weight:normal;color:#000;text-align:right;"><span style="display:inline-block;transform:scaleX(0.98);transform-origin:right">9/1/25</span></div>
<div class="t" style="right:3397px;top:773px;font-size:20px;line-height:20px;font-weight:normal;color:#000;text-align:right;"><span style="display:inline-block;transform:scaleX(0.98);transform-origin:right">9/1/2027</span></div>
<div class="t" style="left:448px;top:773px;font-size:20px;line-height:20px;font-weight:normal;color:#000;"><span style="display:inline-block;transform:scaleX(0.972);transform-origin:left">5426904U3</span></div>
<div class="t" style="right:3135px;top:773px;font-size:20px;line-height:20px;font-weight:normal;color:#000;text-align:right;"><span style="display:inline-block;transform:scaleX(0.99);transform-origin:right">3,185,000</span></div>
<div class="t" style="right:2845px;top:773px;font-size:20px;line-height:20px;font-weight:normal;color:#000;text-align:right;"><span style="display:inline-block;transform:scaleX(0.99);transform-origin:right">3,185,000</span></div>
<div class="t" style="right:2749px;top:773px;font-size:20px;line-height:20px;font-weight:normal;color:#000;text-align:right;"><span style="display:inline-block;transform:scaleX(0.99);transform-origin:right">5.000%</span></div>
<div class="t" style="right:2659px;top:773px;font-size:20px;line-height:20px;font-weight:normal;color:#000;text-align:right;"><span style="display:inline-block;transform:scaleX(0.99);transform-origin:right">3.010%</span></div>
<div class="t" style="right:2569px;top:773px;font-size:20px;line-height:20px;font-weight:normal;color:#000;text-align:right;"><span style="display:inline-block;transform:scaleX(0.98);transform-origin:right">9/1/25</span></div>
<div class="t" style="right:3397px;top:800px;font-size:20px;line-height:20px;font-weight:normal;color:#000;text-align:right;"><span style="display:inline-block;transform:scaleX(0.98);transform-origin:right">9/1/2028</span></div>
<div class="t" style="left:448px;top:800px;font-size:20px;line-height:20px;font-weight:normal;color:#000;"><span style="display:inline-block;transform:scaleX(0.972);transform-origin:left">5426904V1</span></div>
<div class="t" style="right:3135px;top:800px;font-size:20px;line-height:20px;font-weight:normal;color:#000;text-align:right;"><span style="display:inline-block;transform:scaleX(0.99);transform-origin:right">3,345,000</span></div>
<div class="t" style="right:2845px;top:800px;font-size:20px;line-height:20px;font-weight:normal;color:#000;text-align:right;"><span style="display:inline-block;transform:scaleX(0.99);transform-origin:right">3,345,000</span></div>
<div class="t" style="right:2749px;top:800px;font-size:20px;line-height:20px;font-weight:normal;color:#000;text-align:right;"><span style="display:inline-block;transform:scaleX(0.99);transform-origin:right">5.000%</span></div>
<div class="t" style="right:2659px;top:800px;font-size:20px;line-height:20px;font-weight:normal;color:#000;text-align:right;"><span style="display:inline-block;transform:scaleX(0.99);transform-origin:right">3.120%</span></div>
<div class="t" style="right:2569px;top:800px;font-size:20px;line-height:20px;font-weight:normal;color:#000;text-align:right;"><span style="display:inline-block;transform:scaleX(0.98);transform-origin:right">9/1/25</span></div>
<div class="t" style="right:3397px;top:827px;font-size:20px;line-height:20px;font-weight:normal;color:#000;text-align:right;"><span style="display:inline-block;transform:scaleX(0.98);transform-origin:right">9/1/2029</span></div>
<div class="t" style="left:448px;top:827px;font-size:20px;line-height:20px;font-weight:normal;color:#000;"><span style="display:inline-block;transform:scaleX(0.972);transform-origin:left">5426904W9</span></div>
<div class="t" style="right:3135px;top:827px;font-size:20px;line-height:20px;font-weight:normal;color:#000;text-align:right;"><span style="display:inline-block;transform:scaleX(0.99);transform-origin:right">3,510,000</span></div>
<div class="t" style="right:2845px;top:827px;font-size:20px;line-height:20px;font-weight:normal;color:#000;text-align:right;"><span style="display:inline-block;transform:scaleX(0.99);transform-origin:right">3,510,000</span></div>
<div class="t" style="right:2749px;top:827px;font-size:20px;line-height:20px;font-weight:normal;color:#000;text-align:right;"><span style="display:inline-block;transform:scaleX(0.99);transform-origin:right">5.000%</span></div>
<div class="t" style="right:2659px;top:827px;font-size:20px;line-height:20px;font-weight:normal;color:#000;text-align:right;"><span style="display:inline-block;transform:scaleX(0.99);transform-origin:right">3.210%</span></div>
<div class="t" style="right:2569px;top:827px;font-size:20px;line-height:20px;font-weight:normal;color:#000;text-align:right;"><span style="display:inline-block;transform:scaleX(0.98);transform-origin:right">9/1/25</span></div>
<div class="t" style="right:3397px;top:854px;font-size:20px;line-height:20px;font-weight:normal;color:#000;text-align:right;"><span style="display:inline-block;transform:scaleX(0.98);transform-origin:right">9/1/2030</span></div>
<div class="t" style="left:448px;top:854px;font-size:20px;line-height:20px;font-weight:normal;color:#000;"><span style="display:inline-block;transform:scaleX(0.972);transform-origin:left">5426904X7</span></div>
<div class="t" style="right:3135px;top:854px;font-size:20px;line-height:20px;font-weight:normal;color:#000;text-align:right;"><span style="display:inline-block;transform:scaleX(0.99);transform-origin:right">3,685,000</span></div>
<div class="t" style="right:2845px;top:854px;font-size:20px;line-height:20px;font-weight:normal;color:#000;text-align:right;"><span style="display:inline-block;transform:scaleX(0.99);transform-origin:right">3,685,000</span></div>
<div class="t" style="right:2749px;top:854px;font-size:20px;line-height:20px;font-weight:normal;color:#000;text-align:right;"><span style="display:inline-block;transform:scaleX(0.99);transform-origin:right">5.000%</span></div>
<div class="t" style="right:2659px;top:854px;font-size:20px;line-height:20px;font-weight:normal;color:#000;text-align:right;"><span style="display:inline-block;transform:scaleX(0.99);transform-origin:right">3.290%</span></div>
<div class="t" style="right:2569px;top:854px;font-size:20px;line-height:20px;font-weight:normal;color:#000;text-align:right;"><span style="display:inline-block;transform:scaleX(0.98);transform-origin:right">9/1/25</span></div>
<div class="t" style="right:3397px;top:881px;font-size:20px;line-height:20px;font-weight:normal;color:#000;text-align:right;"><span style="display:inline-block;transform:scaleX(0.98);transform-origin:right">9/1/2031</span></div>
<div class="t" style="left:448px;top:881px;font-size:20px;line-height:20px;font-weight:normal;color:#000;"><span style="display:inline-block;transform:scaleX(0.972);transform-origin:left">5426904Y5</span></div>
<div class="t" style="right:3135px;top:881px;font-size:20px;line-height:20px;font-weight:normal;color:#000;text-align:right;"><span style="display:inline-block;transform:scaleX(0.99);transform-origin:right">3,870,000</span></div>
<div class="t" style="right:2845px;top:881px;font-size:20px;line-height:20px;font-weight:normal;color:#000;text-align:right;"><span style="display:inline-block;transform:scaleX(0.99);transform-origin:right">3,870,000</span></div>
<div class="t" style="right:2749px;top:881px;font-size:20px;line-height:20px;font-weight:normal;color:#000;text-align:right;"><span style="display:inline-block;transform:scaleX(0.99);transform-origin:right">5.000%</span></div>
<div class="t" style="right:2659px;top:881px;font-size:20px;line-height:20px;font-weight:normal;color:#000;text-align:right;"><span style="display:inline-block;transform:scaleX(0.99);transform-origin:right">3.350%</span></div>
<div class="t" style="right:2569px;top:881px;font-size:20px;line-height:20px;font-weight:normal;color:#000;text-align:right;"><span style="display:inline-block;transform:scaleX(0.98);transform-origin:right">9/1/25</span></div>
<div class="t" style="right:3397px;top:908px;font-size:20px;line-height:20px;font-weight:normal;color:#000;text-align:right;"><span style="display:inline-block;transform:scaleX(0.98);transform-origin:right">9/1/2032</span></div>
<div class="t" style="left:448px;top:908px;font-size:20px;line-height:20px;font-weight:normal;color:#000;"><span style="display:inline-block;transform:scaleX(0.972);transform-origin:left">5426904Z2</span></div>
<div class="t" style="right:3135px;top:908px;font-size:20px;line-height:20px;font-weight:normal;color:#000;text-align:right;"><span style="display:inline-block;transform:scaleX(0.99);transform-origin:right">4,065,000</span></div>
<div class="t" style="right:2845px;top:908px;font-size:20px;line-height:20px;font-weight:normal;color:#000;text-align:right;"><span style="display:inline-block;transform:scaleX(0.99);transform-origin:right">4,065,000</span></div>
<div class="t" style="right:2749px;top:908px;font-size:20px;line-height:20px;font-weight:normal;color:#000;text-align:right;"><span style="display:inline-block;transform:scaleX(0.99);transform-origin:right">5.000%</span></div>
<div class="t" style="right:2659px;top:908px;font-size:20px;line-height:20px;font-weight:normal;color:#000;text-align:right;"><span style="display:inline-block;transform:scaleX(0.99);transform-origin:right">3.410%</span></div>
<div class="t" style="right:2569px;top:908px;font-size:20px;line-height:20px;font-weight:normal;color:#000;text-align:right;"><span style="display:inline-block;transform:scaleX(0.98);transform-origin:right">9/1/25</span></div>
<div class="t" style="right:3397px;top:935px;font-size:20px;line-height:20px;font-weight:normal;color:#000;text-align:right;"><span style="display:inline-block;transform:scaleX(0.98);transform-origin:right">9/1/2033</span></div>
<div class="t" style="left:448px;top:935px;font-size:20px;line-height:20px;font-weight:normal;color:#000;"><span style="display:inline-block;transform:scaleX(0.972);transform-origin:left">5426905A6</span></div>
<div class="t" style="right:3135px;top:935px;font-size:20px;line-height:20px;font-weight:normal;color:#000;text-align:right;"><span style="display:inline-block;transform:scaleX(0.99);transform-origin:right">4,265,000</span></div>
<div class="t" style="right:2845px;top:935px;font-size:20px;line-height:20px;font-weight:normal;color:#000;text-align:right;"><span style="display:inline-block;transform:scaleX(0.99);transform-origin:right">4,265,000</span></div>
<div class="t" style="right:2749px;top:935px;font-size:20px;line-height:20px;font-weight:normal;color:#000;text-align:right;"><span style="display:inline-block;transform:scaleX(0.99);transform-origin:right">5.000%</span></div>
<div class="t" style="right:2659px;top:935px;font-size:20px;line-height:20px;font-weight:normal;color:#000;text-align:right;"><span style="display:inline-block;transform:scaleX(0.99);transform-origin:right">3.460%</span></div>
<div class="t" style="right:2569px;top:935px;font-size:20px;line-height:20px;font-weight:normal;color:#000;text-align:right;"><span style="display:inline-block;transform:scaleX(0.98);transform-origin:right">9/1/25</span></div>
<div class="t" style="right:3397px;top:962px;font-size:20px;line-height:20px;font-weight:normal;color:#000;text-align:right;"><span style="display:inline-block;transform:scaleX(0.98);transform-origin:right">9/1/2034</span></div>
<div class="t" style="left:448px;top:962px;font-size:20px;line-height:20px;font-weight:normal;color:#000;"><span style="display:inline-block;transform:scaleX(0.972);transform-origin:left">5426904G4</span></div>
<div class="t" style="right:3135px;top:962px;font-size:20px;line-height:20px;font-weight:normal;color:#000;text-align:right;"><span style="display:inline-block;transform:scaleX(0.99);transform-origin:right">4,480,000</span></div>
<div class="t" style="right:2845px;top:962px;font-size:20px;line-height:20px;font-weight:normal;color:#000;text-align:right;"><span style="display:inline-block;transform:scaleX(0.99);transform-origin:right">4,480,000</span></div>
<div class="t" style="right:2749px;top:962px;font-size:20px;line-height:20px;font-weight:normal;color:#000;text-align:right;"><span style="display:inline-block;transform:scaleX(0.99);transform-origin:right">5.000%</span></div>
<div class="t" style="right:2659px;top:962px;font-size:20px;line-height:20px;font-weight:normal;color:#000;text-align:right;"><span style="display:inline-block;transform:scaleX(0.99);transform-origin:right">3.510%</span></div>
<div class="t" style="right:2569px;top:962px;font-size:20px;line-height:20px;font-weight:normal;color:#000;text-align:right;"><span style="display:inline-block;transform:scaleX(0.98);transform-origin:right">9/1/25</span></div>
<div class="t" style="right:3397px;top:989px;font-size:20px;line-height:20px;font-weight:normal;color:#000;text-align:right;"><span style="display:inline-block;transform:scaleX(0.98);transform-origin:right">9/1/2035</span></div>
<div class="t" style="left:448px;top:989px;font-size:20px;line-height:20px;font-weight:normal;color:#000;"><span style="display:inline-block;transform:scaleX(0.972);transform-origin:left">5426904H2</span></div>
<div class="t" style="right:3135px;top:989px;font-size:20px;line-height:20px;font-weight:normal;color:#000;text-align:right;"><span style="display:inline-block;transform:scaleX(0.99);transform-origin:right">4,705,000</span></div>
<div class="t" style="right:2845px;top:989px;font-size:20px;line-height:20px;font-weight:normal;color:#000;text-align:right;"><span style="display:inline-block;transform:scaleX(0.99);transform-origin:right">4,705,000</span></div>
<div class="t" style="right:2749px;top:989px;font-size:20px;line-height:20px;font-weight:normal;color:#000;text-align:right;"><span style="display:inline-block;transform:scaleX(0.99);transform-origin:right">5.000%</span></div>
<div class="t" style="right:2659px;top:989px;font-size:20px;line-height:20px;font-weight:normal;color:#000;text-align:right;"><span style="display:inline-block;transform:scaleX(0.99);transform-origin:right">3.560%</span></div>
<div class="t" style="right:2569px;top:989px;font-size:20px;line-height:20px;font-weight:normal;color:#000;text-align:right;"><span style="display:inline-block;transform:scaleX(0.98);transform-origin:right">9/1/25</span></div>
<div class="t" style="right:3397px;top:1016px;font-size:20px;line-height:20px;font-weight:normal;color:#000;text-align:right;"><span style="display:inline-block;transform:scaleX(0.98);transform-origin:right">9/1/2036</span></div>
<div class="t" style="left:448px;top:1016px;font-size:20px;line-height:20px;font-weight:normal;color:#000;"><span style="display:inline-block;transform:scaleX(0.972);transform-origin:left">5426905G3</span></div>
<div class="t" style="right:3135px;top:1016px;font-size:20px;line-height:20px;font-weight:normal;color:#000;text-align:right;"><span style="display:inline-block;transform:scaleX(0.99);transform-origin:right">4,940,000</span></div>
<div class="t" style="right:2845px;top:1016px;font-size:20px;line-height:20px;font-weight:normal;color:#000;text-align:right;"><span style="display:inline-block;transform:scaleX(0.99);transform-origin:right">4,940,000</span></div>
<div class="t" style="right:2749px;top:1016px;font-size:20px;line-height:20px;font-weight:normal;color:#000;text-align:right;"><span style="display:inline-block;transform:scaleX(0.99);transform-origin:right">5.000%</span></div>
<div class="t" style="right:2659px;top:1016px;font-size:20px;line-height:20px;font-weight:normal;color:#000;text-align:right;"><span style="display:inline-block;transform:scaleX(0.99);transform-origin:right">3.580%</span></div>
<div class="t" style="right:2569px;top:1016px;font-size:20px;line-height:20px;font-weight:normal;color:#000;text-align:right;"><span style="display:inline-block;transform:scaleX(0.98);transform-origin:right">9/1/25</span></div>
<div class="t" style="right:3397px;top:1043px;font-size:20px;line-height:20px;font-weight:normal;color:#000;text-align:right;"><span style="display:inline-block;transform:scaleX(0.98);transform-origin:right">9/1/2037</span></div>
<div class="t" style="left:448px;top:1043px;font-size:20px;line-height:20px;font-weight:normal;color:#000;"><span style="display:inline-block;transform:scaleX(0.972);transform-origin:left">5426905H1</span></div>
<div class="t" style="right:3135px;top:1043px;font-size:20px;line-height:20px;font-weight:normal;color:#000;text-align:right;"><span style="display:inline-block;transform:scaleX(0.99);transform-origin:right">5,185,000</span></div>
<div class="t" style="right:2845px;top:1043px;font-size:20px;line-height:20px;font-weight:normal;color:#000;text-align:right;"><span style="display:inline-block;transform:scaleX(0.99);transform-origin:right">5,185,000</span></div>
<div class="t" style="right:2749px;top:1043px;font-size:20px;line-height:20px;font-weight:normal;color:#000;text-align:right;"><span style="display:inline-block;transform:scaleX(0.99);transform-origin:right">5.000%</span></div>
<div class="t" style="right:2659px;top:1043px;font-size:20px;line-height:20px;font-weight:normal;color:#000;text-align:right;"><span style="display:inline-block;transform:scaleX(0.99);transform-origin:right">3.630%</span></div>
<div class="t" style="right:2569px;top:1043px;font-size:20px;line-height:20px;font-weight:normal;color:#000;text-align:right;"><span style="display:inline-block;transform:scaleX(0.98);transform-origin:right">9/1/25</span></div>
<div class="t" style="right:3397px;top:1070px;font-size:20px;line-height:20px;font-weight:normal;color:#000;text-align:right;"><span style="display:inline-block;transform:scaleX(0.98);transform-origin:right">9/1/2038</span></div>
<div class="t" style="left:448px;top:1070px;font-size:20px;line-height:20px;font-weight:normal;color:#000;"><span style="display:inline-block;transform:scaleX(0.972);transform-origin:left">5426905J7</span></div>
<div class="t" style="right:3135px;top:1070px;font-size:20px;line-height:20px;font-weight:normal;color:#000;text-align:right;"><span style="display:inline-block;transform:scaleX(0.99);transform-origin:right">5,445,000</span></div>
<div class="t" style="right:2845px;top:1070px;font-size:20px;line-height:20px;font-weight:normal;color:#000;text-align:right;"><span style="display:inline-block;transform:scaleX(0.99);transform-origin:right">5,445,000</span></div>
<div class="t" style="right:2749px;top:1070px;font-size:20px;line-height:20px;font-weight:normal;color:#000;text-align:right;"><span style="display:inline-block;transform:scaleX(0.99);transform-origin:right">5.000%</span></div>
<div class="t" style="right:2659px;top:1070px;font-size:20px;line-height:20px;font-weight:normal;color:#000;text-align:right;"><span style="display:inline-block;transform:scaleX(0.99);transform-origin:right">3.670%</span></div>
<div class="t" style="right:2569px;top:1070px;font-size:20px;line-height:20px;font-weight:normal;color:#000;text-align:right;"><span style="display:inline-block;transform:scaleX(0.98);transform-origin:right">9/1/25</span></div>
<div class="t" style="right:3397px;top:1097px;font-size:20px;line-height:20px;font-weight:normal;color:#000;text-align:right;"><span style="display:inline-block;transform:scaleX(0.98);transform-origin:right">9/1/2039</span></div>
<div class="t" style="left:448px;top:1097px;font-size:20px;line-height:20px;font-weight:normal;color:#000;"><span style="display:inline-block;transform:scaleX(0.972);transform-origin:left">5426904J8</span></div>
<div class="t" style="right:2990px;top:1097px;font-size:20px;line-height:20px;font-weight:normal;color:#000;text-align:right;"><span style="display:inline-block;transform:scaleX(0.99);transform-origin:right">5,715,000</span></div>
<div class="t" style="right:2845px;top:1097px;font-size:20px;line-height:20px;font-weight:normal;color:#000;text-align:right;"><span style="display:inline-block;transform:scaleX(0.99);transform-origin:right">5,715,000</span></div>
<div class="t" style="right:2749px;top:1097px;font-size:20px;line-height:20px;font-weight:normal;color:#000;text-align:right;"><span style="display:inline-block;transform:scaleX(0.99);transform-origin:right">4.000%</span></div>
<div class="t" style="right:2659px;top:1097px;font-size:20px;line-height:20px;font-weight:normal;color:#000;text-align:right;"><span style="display:inline-block;transform:scaleX(0.99);transform-origin:right">4.032%</span></div>
<div class="t" style="right:2569px;top:1097px;font-size:20px;line-height:20px;font-weight:normal;color:#000;text-align:right;"><span style="display:inline-block;transform:scaleX(0.98);transform-origin:right">9/1/25</span></div>
<div class="t" style="right:3397px;top:1124px;font-size:20px;line-height:20px;font-weight:normal;color:#000;text-align:right;"><span style="display:inline-block;transform:scaleX(0.98);transform-origin:right">9/1/2040</span></div>
<div class="t" style="left:448px;top:1124px;font-size:20px;line-height:20px;font-weight:normal;color:#000;"><span style="display:inline-block;transform:scaleX(0.972);transform-origin:left">5426904J8</span></div>
<div class="t" style="right:3135px;top:1124px;font-size:20px;line-height:20px;font-weight:normal;color:#000;text-align:right;"><span style="display:inline-block;transform:scaleX(0.99);transform-origin:right">11,660,000</span></div>
<div class="t" style="right:2990px;top:1124px;font-size:20px;line-height:20px;font-weight:normal;color:#000;text-align:right;"><span style="display:inline-block;transform:scaleX(0.99);transform-origin:right">5,945,000</span></div>
<div class="t" style="right:2845px;top:1124px;font-size:20px;line-height:20px;font-weight:normal;color:#000;text-align:right;"><span style="display:inline-block;transform:scaleX(0.99);transform-origin:right">5,945,000</span></div>
<div class="t" style="right:2749px;top:1124px;font-size:20px;line-height:20px;font-weight:normal;color:#000;text-align:right;"><span style="display:inline-block;transform:scaleX(0.99);transform-origin:right">4.000%</span></div>
<div class="t" style="right:2659px;top:1124px;font-size:20px;line-height:20px;font-weight:normal;color:#000;text-align:right;"><span style="display:inline-block;transform:scaleX(0.99);transform-origin:right">4.032%</span></div>
<div class="t" style="right:2569px;top:1124px;font-size:20px;line-height:20px;font-weight:normal;color:#000;text-align:right;"><span style="display:inline-block;transform:scaleX(0.98);transform-origin:right">9/1/25</span></div>
<div class="t" style="right:3397px;top:1151px;font-size:20px;line-height:20px;font-weight:normal;color:#000;text-align:right;"><span style="display:inline-block;transform:scaleX(0.98);transform-origin:right">9/1/2041</span></div>
<div class="t" style="left:448px;top:1151px;font-size:20px;line-height:20px;font-weight:normal;color:#000;"><span style="display:inline-block;transform:scaleX(0.972);transform-origin:left">5426904K5</span></div>
<div class="t" style="right:2990px;top:1151px;font-size:20px;line-height:20px;font-weight:normal;color:#000;text-align:right;"><span style="display:inline-block;transform:scaleX(0.99);transform-origin:right">6,185,000</span></div>
<div class="t" style="right:2845px;top:1151px;font-size:20px;line-height:20px;font-weight:normal;color:#000;text-align:right;"><span style="display:inline-block;transform:scaleX(0.99);transform-origin:right">6,185,000</span></div>
<div class="t" style="right:2749px;top:1151px;font-size:20px;line-height:20px;font-weight:normal;color:#000;text-align:right;"><span style="display:inline-block;transform:scaleX(0.99);transform-origin:right">5.000%</span></div>
<div class="t" style="right:2659px;top:1151px;font-size:20px;line-height:20px;font-weight:normal;color:#000;text-align:right;"><span style="display:inline-block;transform:scaleX(0.99);transform-origin:right">3.750%</span></div>
<div class="t" style="right:2569px;top:1151px;font-size:20px;line-height:20px;font-weight:normal;color:#000;text-align:right;"><span style="display:inline-block;transform:scaleX(0.98);transform-origin:right">9/1/25</span></div>
<div class="t" style="right:3397px;top:1178px;font-size:20px;line-height:20px;font-weight:normal;color:#000;text-align:right;"><span style="display:inline-block;transform:scaleX(0.98);transform-origin:right">9/1/2042</span></div>
<div class="t" style="left:448px;top:1178px;font-size:20px;line-height:20px;font-weight:normal;color:#000;"><span style="display:inline-block;transform:scaleX(0.972);transform-origin:left">5426904K5</span></div>
<div class="t" style="right:2990px;top:1178px;font-size:20px;line-height:20px;font-weight:normal;color:#000;text-align:right;"><span style="display:inline-block;transform:scaleX(0.99);transform-origin:right">6,495,000</span></div>
<div class="t" style="right:2845px;top:1178px;font-size:20px;line-height:20px;font-weight:normal;color:#000;text-align:right;"><span style="display:inline-block;transform:scaleX(0.99);transform-origin:right">6,495,000</span></div>
<div class="t" style="right:2749px;top:1178px;font-size:20px;line-height:20px;font-weight:normal;color:#000;text-align:right;"><span style="display:inline-block;transform:scaleX(0.99);transform-origin:right">5.000%</span></div>
<div class="t" style="right:2659px;top:1178px;font-size:20px;line-height:20px;font-weight:normal;color:#000;text-align:right;"><span style="display:inline-block;transform:scaleX(0.99);transform-origin:right">3.750%</span></div>
<div class="t" style="right:2569px;top:1178px;font-size:20px;line-height:20px;font-weight:normal;color:#000;text-align:right;"><span style="display:inline-block;transform:scaleX(0.98);transform-origin:right">9/1/25</span></div>
<div class="t" style="right:3397px;top:1205px;font-size:20px;line-height:20px;font-weight:normal;color:#000;text-align:right;"><span style="display:inline-block;transform:scaleX(0.98);transform-origin:right">9/1/2043</span></div>
<div class="t" style="left:448px;top:1205px;font-size:20px;line-height:20px;font-weight:normal;color:#000;"><span style="display:inline-block;transform:scaleX(0.972);transform-origin:left">5426904K5</span></div>
<div class="t" style="right:2990px;top:1205px;font-size:20px;line-height:20px;font-weight:normal;color:#000;text-align:right;"><span style="display:inline-block;transform:scaleX(0.99);transform-origin:right">6,815,000</span></div>
<div class="t" style="right:2845px;top:1205px;font-size:20px;line-height:20px;font-weight:normal;color:#000;text-align:right;"><span style="display:inline-block;transform:scaleX(0.99);transform-origin:right">6,815,000</span></div>
<div class="t" style="right:2749px;top:1205px;font-size:20px;line-height:20px;font-weight:normal;color:#000;text-align:right;"><span style="display:inline-block;transform:scaleX(0.99);transform-origin:right">5.000%</span></div>
<div class="t" style="right:2659px;top:1205px;font-size:20px;line-height:20px;font-weight:normal;color:#000;text-align:right;"><span style="display:inline-block;transform:scaleX(0.99);transform-origin:right">3.750%</span></div>
<div class="t" style="right:2569px;top:1205px;font-size:20px;line-height:20px;font-weight:normal;color:#000;text-align:right;"><span style="display:inline-block;transform:scaleX(0.98);transform-origin:right">9/1/25</span></div>
<div class="t" style="right:3397px;top:1232px;font-size:20px;line-height:20px;font-weight:normal;color:#000;text-align:right;"><span style="display:inline-block;transform:scaleX(0.98);transform-origin:right">9/1/2044</span></div>
<div class="t" style="left:448px;top:1232px;font-size:20px;line-height:20px;font-weight:normal;color:#000;"><span style="display:inline-block;transform:scaleX(0.972);transform-origin:left">5426904K5</span></div>
<div class="t" style="right:2990px;top:1232px;font-size:20px;line-height:20px;font-weight:normal;color:#000;text-align:right;"><span style="display:inline-block;transform:scaleX(0.99);transform-origin:right">7,160,000</span></div>
<div class="t" style="right:2845px;top:1232px;font-size:20px;line-height:20px;font-weight:normal;color:#000;text-align:right;"><span style="display:inline-block;transform:scaleX(0.99);transform-origin:right">7,160,000</span></div>
<div class="t" style="right:2749px;top:1232px;font-size:20px;line-height:20px;font-weight:normal;color:#000;text-align:right;"><span style="display:inline-block;transform:scaleX(0.99);transform-origin:right">5.000%</span></div>
<div class="t" style="right:2659px;top:1232px;font-size:20px;line-height:20px;font-weight:normal;color:#000;text-align:right;"><span style="display:inline-block;transform:scaleX(0.99);transform-origin:right">3.750%</span></div>
<div class="t" style="right:2569px;top:1232px;font-size:20px;line-height:20px;font-weight:normal;color:#000;text-align:right;"><span style="display:inline-block;transform:scaleX(0.98);transform-origin:right">9/1/25</span></div>
<div class="t" style="right:3397px;top:1259px;font-size:20px;line-height:20px;font-weight:normal;color:#000;text-align:right;"><span style="display:inline-block;transform:scaleX(0.98);transform-origin:right">9/1/2045</span></div>
<div class="t" style="left:448px;top:1259px;font-size:20px;line-height:20px;font-weight:normal;color:#000;"><span style="display:inline-block;transform:scaleX(0.972);transform-origin:left">5426904K5</span></div>
<div class="t" style="right:3135px;top:1259px;font-size:20px;line-height:20px;font-weight:normal;color:#000;text-align:right;"><span style="display:inline-block;transform:scaleX(0.99);transform-origin:right">34,170,000</span></div>
<div class="t" style="right:2990px;top:1259px;font-size:20px;line-height:20px;font-weight:normal;color:#000;text-align:right;"><span style="display:inline-block;transform:scaleX(0.99);transform-origin:right">7,515,000</span></div>
<div class="t" style="right:2845px;top:1259px;font-size:20px;line-height:20px;font-weight:normal;color:#000;text-align:right;"><span style="display:inline-block;transform:scaleX(0.99);transform-origin:right">7,515,000</span></div>
<div class="t" style="right:2749px;top:1259px;font-size:20px;line-height:20px;font-weight:normal;color:#000;text-align:right;"><span style="display:inline-block;transform:scaleX(0.99);transform-origin:right">5.000%</span></div>
<div class="t" style="right:2659px;top:1259px;font-size:20px;line-height:20px;font-weight:normal;color:#000;text-align:right;"><span style="display:inline-block;transform:scaleX(0.99);transform-origin:right">3.750%</span></div>
<div class="t" style="right:2569px;top:1259px;font-size:20px;line-height:20px;font-weight:normal;color:#000;text-align:right;"><span style="display:inline-block;transform:scaleX(0.98);transform-origin:right">9/1/25</span></div>
<div class="t" style="right:3135px;top:1367px;font-size:20px;line-height:20px;font-weight:normal;color:#000;text-align:right;"><span style="display:inline-block;transform:scaleX(0.99);transform-origin:right">115,440,000</span></div>
<div class="t" style="right:2990px;top:1367px;font-size:20px;line-height:20px;font-weight:normal;color:#000;text-align:right;"><span style="display:inline-block;transform:scaleX(0.99);transform-origin:right">45,830,000</span></div>
<div class="t" style="right:2845px;top:1367px;font-size:20px;line-height:20px;font-weight:normal;color:#000;text-align:right;"><span style="display:inline-block;transform:scaleX(0.99);transform-origin:right">115,440,000</span></div>
<div class="t" style="right:2569px;top:1367px;font-size:20px;line-height:20px;font-weight:normal;color:#000;text-align:right;"><span style="display:inline-block;transform:scaleX(0.98);transform-origin:right">9/1/25</span></div>
<div class="t" style="right:2455px;top:557px;font-size:20px;line-height:20px;font-weight:normal;color:#000;text-align:right;"><span style="display:inline-block;transform:scaleX(0.98);transform-origin:right">9/1/2019</span></div>
<div class="t" style="left:1390px;top:557px;font-size:20px;line-height:20px;font-weight:normal;color:#000;"><span style="display:inline-block;transform:scaleX(0.972);transform-origin:left">5426904L3</span></div>
<div class="t" style="right:2190px;top:557px;font-size:20px;line-height:20px;font-weight:normal;color:#000;text-align:right;"><span style="display:inline-block;transform:scaleX(0.99);transform-origin:right">380,000</span></div>
<div class="t" style="right:1900px;top:557px;font-size:20px;line-height:20px;font-weight:normal;color:#000;text-align:right;"><span style="display:inline-block;transform:scaleX(0.99);transform-origin:right">380,000</span></div>
<div class="t" style="right:1804px;top:557px;font-size:20px;line-height:20px;font-weight:normal;color:#000;text-align:right;"><span style="display:inline-block;transform:scaleX(0.99);transform-origin:right">4.000%</span></div>
<div class="t" style="right:1714px;top:557px;font-size:20px;line-height:20px;font-weight:normal;color:#000;text-align:right;"><span style="display:inline-block;transform:scaleX(0.99);transform-origin:right">1.360%</span></div>
<div class="t" style="right:2455px;top:584px;font-size:20px;line-height:20px;font-weight:normal;color:#000;text-align:right;"><span style="display:inline-block;transform:scaleX(0.98);transform-origin:right">9/1/2020</span></div>
<div class="t" style="left:1390px;top:584px;font-size:20px;line-height:20px;font-weight:normal;color:#000;"><span style="display:inline-block;transform:scaleX(0.972);transform-origin:left">5426904M1</span></div>
<div class="t" style="right:2190px;top:584px;font-size:20px;line-height:20px;font-weight:normal;color:#000;text-align:right;"><span style="display:inline-block;transform:scaleX(0.99);transform-origin:right">140,000</span></div>
<div class="t" style="right:1900px;top:584px;font-size:20px;line-height:20px;font-weight:normal;color:#000;text-align:right;"><span style="display:inline-block;transform:scaleX(0.99);transform-origin:right">140,000</span></div>
<div class="t" style="right:1804px;top:584px;font-size:20px;line-height:20px;font-weight:normal;color:#000;text-align:right;"><span style="display:inline-block;transform:scaleX(0.99);transform-origin:right">4.000%</span></div>
<div class="t" style="right:1714px;top:584px;font-size:20px;line-height:20px;font-weight:normal;color:#000;text-align:right;"><span style="display:inline-block;transform:scaleX(0.99);transform-origin:right">1.620%</span></div>
<div class="t" style="right:2455px;top:611px;font-size:20px;line-height:20px;font-weight:normal;color:#000;text-align:right;"><span style="display:inline-block;transform:scaleX(0.98);transform-origin:right">9/1/2021</span></div>
<div class="t" style="left:1390px;top:611px;font-size:20px;line-height:20px;font-weight:normal;color:#000;"><span style="display:inline-block;transform:scaleX(0.972);transform-origin:left">5426904N9</span></div>
<div class="t" style="right:2190px;top:611px;font-size:20px;line-height:20px;font-weight:normal;color:#000;text-align:right;"><span style="display:inline-block;transform:scaleX(0.99);transform-origin:right">100,000</span></div>
<div class="t" style="right:1900px;top:611px;font-size:20px;line-height:20px;font-weight:normal;color:#000;text-align:right;"><span style="display:inline-block;transform:scaleX(0.99);transform-origin:right">100,000</span></div>
<div class="t" style="right:1804px;top:611px;font-size:20px;line-height:20px;font-weight:normal;color:#000;text-align:right;"><span style="display:inline-block;transform:scaleX(0.99);transform-origin:right">4.000%</span></div>
<div class="t" style="right:1714px;top:611px;font-size:20px;line-height:20px;font-weight:normal;color:#000;text-align:right;"><span style="display:inline-block;transform:scaleX(0.99);transform-origin:right">1.880%</span></div>
<div class="t" style="right:2455px;top:638px;font-size:20px;line-height:20px;font-weight:normal;color:#000;text-align:right;"><span style="display:inline-block;transform:scaleX(0.98);transform-origin:right">9/1/2022</span></div>
<div class="t" style="left:1390px;top:638px;font-size:20px;line-height:20px;font-weight:normal;color:#000;"><span style="display:inline-block;transform:scaleX(0.972);transform-origin:left">5426904P4</span></div>
<div class="t" style="right:2190px;top:638px;font-size:20px;line-height:20px;font-weight:normal;color:#000;text-align:right;"><span style="display:inline-block;transform:scaleX(0.99);transform-origin:right">120,000</span></div>
<div class="t" style="right:1900px;top:638px;font-size:20px;line-height:20px;font-weight:normal;color:#000;text-align:right;"><span style="display:inline-block;transform:scaleX(0.99);transform-origin:right">120,000</span></div>
<div class="t" style="right:1804px;top:638px;font-size:20px;line-height:20px;font-weight:normal;color:#000;text-align:right;"><span style="display:inline-block;transform:scaleX(0.99);transform-origin:right">3.000%</span></div>
<div class="t" style="right:1714px;top:638px;font-size:20px;line-height:20px;font-weight:normal;color:#000;text-align:right;"><span style="display:inline-block;transform:scaleX(0.99);transform-origin:right">2.100%</span></div>
<div class="t" style="right:2455px;top:719px;font-size:20px;line-height:20px;font-weight:normal;color:#000;text-align:right;"><span style="display:inline-block;transform:scaleX(0.98);transform-origin:right">9/1/2025</span></div>
<div class="t" style="left:1390px;top:719px;font-size:20px;line-height:20px;font-weight:normal;color:#000;"><span style="display:inline-block;transform:scaleX(0.972);transform-origin:left">5426904S8</span></div>
<div class="t" style="right:2190px;top:719px;font-size:20px;line-height:20px;font-weight:normal;color:#000;text-align:right;"><span style="display:inline-block;transform:scaleX(0.99);transform-origin:right">1,050,000</span></div>
<div class="t" style="right:1900px;top:719px;font-size:20px;line-height:20px;font-weight:normal;color:#000;text-align:right;"><span style="display:inline-block;transform:scaleX(0.99);transform-origin:right">1,050,000</span></div>
<div class="t" style="right:1804px;top:719px;font-size:20px;line-height:20px;font-weight:normal;color:#000;text-align:right;"><span style="display:inline-block;transform:scaleX(0.99);transform-origin:right">3.000%</span></div>
<div class="t" style="right:1714px;top:719px;font-size:20px;line-height:20px;font-weight:normal;color:#000;text-align:right;"><span style="display:inline-block;transform:scaleX(0.99);transform-origin:right">2.690%</span></div>
<div class="t" style="right:1498px;top:530px;font-size:20px;line-height:20px;font-weight:normal;color:#000;text-align:right;"><span style="display:inline-block;transform:scaleX(0.99);transform-origin:right">2,857,650</span></div>
<div class="t" style="right:1366px;top:530px;font-size:20px;line-height:20px;font-weight:normal;color:#000;text-align:right;"><span style="display:inline-block;transform:scaleX(0.99);transform-origin:right">2,857,650</span></div>
<div class="t" style="right:1498px;top:557px;font-size:20px;line-height:20px;font-weight:normal;color:#000;text-align:right;"><span style="display:inline-block;transform:scaleX(0.99);transform-origin:right">5,715,300</span></div>
<div class="t" style="right:1366px;top:557px;font-size:20px;line-height:20px;font-weight:normal;color:#000;text-align:right;"><span style="display:inline-block;transform:scaleX(0.99);transform-origin:right">7,895,300</span></div>
<div class="t" style="right:1498px;top:584px;font-size:20px;line-height:20px;font-weight:normal;color:#000;text-align:right;"><span style="display:inline-block;transform:scaleX(0.99);transform-origin:right">5,610,100</span></div>
<div class="t" style="right:1366px;top:584px;font-size:20px;line-height:20px;font-weight:normal;color:#000;text-align:right;"><span style="display:inline-block;transform:scaleX(0.99);transform-origin:right">7,895,100</span></div>
<div class="t" style="right:1498px;top:611px;font-size:20px;line-height:20px;font-weight:normal;color:#000;text-align:right;"><span style="display:inline-block;transform:scaleX(0.99);transform-origin:right">5,497,250</span></div>
<div class="t" style="right:1366px;top:611px;font-size:20px;line-height:20px;font-weight:normal;color:#000;text-align:right;"><span style="display:inline-block;transform:scaleX(0.99);transform-origin:right">7,892,250</span></div>
<div class="t" style="right:1498px;top:638px;font-size:20px;line-height:20px;font-weight:normal;color:#000;text-align:right;"><span style="display:inline-block;transform:scaleX(0.99);transform-origin:right">5,378,500</span></div>
<div class="t" style="right:1366px;top:638px;font-size:20px;line-height:20px;font-weight:normal;color:#000;text-align:right;"><span style="display:inline-block;transform:scaleX(0.99);transform-origin:right">7,893,500</span></div>
<div class="t" style="right:1498px;top:665px;font-size:20px;line-height:20px;font-weight:normal;color:#000;text-align:right;"><span style="display:inline-block;transform:scaleX(0.99);transform-origin:right">5,255,150</span></div>
<div class="t" style="right:1366px;top:665px;font-size:20px;line-height:20px;font-weight:normal;color:#000;text-align:right;"><span style="display:inline-block;transform:scaleX(0.99);transform-origin:right">7,890,150</span></div>
<div class="t" style="right:1498px;top:692px;font-size:20px;line-height:20px;font-weight:normal;color:#000;text-align:right;"><span style="display:inline-block;transform:scaleX(0.99);transform-origin:right">5,123,400</span></div>
<div class="t" style="right:1366px;top:692px;font-size:20px;line-height:20px;font-weight:normal;color:#000;text-align:right;"><span style="display:inline-block;transform:scaleX(0.99);transform-origin:right">7,893,400</span></div>
<div class="t" style="right:1498px;top:719px;font-size:20px;line-height:20px;font-weight:normal;color:#000;text-align:right;"><span style="display:inline-block;transform:scaleX(0.99);transform-origin:right">4,984,900</span></div>
<div class="t" style="right:1366px;top:719px;font-size:20px;line-height:20px;font-weight:normal;color:#000;text-align:right;"><span style="display:inline-block;transform:scaleX(0.99);transform-origin:right">7,894,900</span></div>
<div class="t" style="right:1498px;top:746px;font-size:20px;line-height:20px;font-weight:normal;color:#000;text-align:right;"><span style="display:inline-block;transform:scaleX(0.99);transform-origin:right">4,860,400</span></div>
<div class="t" style="right:1366px;top:746px;font-size:20px;line-height:20px;font-weight:normal;color:#000;text-align:right;"><span style="display:inline-block;transform:scaleX(0.99);transform-origin:right">7,890,400</span></div>
<div class="t" style="right:1498px;top:773px;font-size:20px;line-height:20px;font-weight:normal;color:#000;text-align:right;"><span style="display:inline-block;transform:scaleX(0.99);transform-origin:right">4,708,900</span></div>
<div class="t" style="right:1366px;top:773px;font-size:20px;line-height:20px;font-weight:normal;color:#000;text-align:right;"><span style="display:inline-block;transform:scaleX(0.99);transform-origin:right">7,893,900</span></div>
<div class="t" style="right:1498px;top:800px;font-size:20px;line-height:20px;font-weight:normal;color:#000;text-align:right;"><span style="display:inline-block;transform:scaleX(0.99);transform-origin:right">4,549,650</span></div>
<div class="t" style="right:1366px;top:800px;font-size:20px;line-height:20px;font-weight:normal;color:#000;text-align:right;"><span style="display:inline-block;transform:scaleX(0.99);transform-origin:right">7,894,650</span></div>
<div class="t" style="right:1498px;top:827px;font-size:20px;line-height:20px;font-weight:normal;color:#000;text-align:right;"><span style="display:inline-block;transform:scaleX(0.99);transform-origin:right">4,382,400</span></div>
<div class="t" style="right:1366px;top:827px;font-size:20px;line-height:20px;font-weight:normal;color:#000;text-align:right;"><span style="display:inline-block;transform:scaleX(0.99);transform-origin:right">7,892,400</span></div>
<div class="t" style="right:1498px;top:854px;font-size:20px;line-height:20px;font-weight:normal;color:#000;text-align:right;"><span style="display:inline-block;transform:scaleX(0.99);transform-origin:right">4,206,900</span></div>
<div class="t" style="right:1366px;top:854px;font-size:20px;line-height:20px;font-weight:normal;color:#000;text-align:right;"><span style="display:inline-block;transform:scaleX(0.99);transform-origin:right">7,891,900</span></div>
<div class="t" style="right:1498px;top:881px;font-size:20px;line-height:20px;font-weight:normal;color:#000;text-align:right;"><span style="display:inline-block;transform:scaleX(0.99);transform-origin:right">4,022,650</span></div>
<div class="t" style="right:1366px;top:881px;font-size:20px;line-height:20px;font-weight:normal;color:#000;text-align:right;"><span style="display:inline-block;transform:scaleX(0.99);transform-origin:right">7,892,650</span></div>
<div class="t" style="right:1498px;top:908px;font-size:20px;line-height:20px;font-weight:normal;color:#000;text-align:right;"><span style="display:inline-block;transform:scaleX(0.99);transform-origin:right">3,829,150</span></div>
<div class="t" style="right:1366px;top:908px;font-size:20px;line-height:20px;font-weight:normal;color:#000;text-align:right;"><span style="display:inline-block;transform:scaleX(0.99);transform-origin:right">7,894,150</span></div>
<div class="t" style="right:1498px;top:935px;font-size:20px;line-height:20px;font-weight:normal;color:#000;text-align:right;"><span style="display:inline-block;transform:scaleX(0.99);transform-origin:right">3,625,900</span></div>
<div class="t" style="right:1366px;top:935px;font-size:20px;line-height:20px;font-weight:normal;color:#000;text-align:right;"><span style="display:inline-block;transform:scaleX(0.99);transform-origin:right">7,890,900</span></div>
<div class="t" style="right:1498px;top:962px;font-size:20px;line-height:20px;font-weight:normal;color:#000;text-align:right;"><span style="display:inline-block;transform:scaleX(0.99);transform-origin:right">3,412,650</span></div>
<div class="t" style="right:1366px;top:962px;font-size:20px;line-height:20px;font-weight:normal;color:#000;text-align:right;"><span style="display:inline-block;transform:scaleX(0.99);transform-origin:right">7,892,650</span></div>
<div class="t" style="right:1498px;top:989px;font-size:20px;line-height:20px;font-weight:normal;color:#000;text-align:right;"><span style="display:inline-block;transform:scaleX(0.99);transform-origin:right">3,188,650</span></div>
<div class="t" style="right:1366px;top:989px;font-size:20px;line-height:20px;font-weight:normal;color:#000;text-align:right;"><span style="display:inline-block;transform:scaleX(0.99);transform-origin:right">7,893,650</span></div>
<div class="t" style="right:1498px;top:1016px;font-size:20px;line-height:20px;font-weight:normal;color:#000;text-align:right;"><span style="display:inline-block;transform:scaleX(0.99);transform-origin:right">2,953,400</span></div>
<div class="t" style="right:1366px;top:1016px;font-size:20px;line-height:20px;font-weight:normal;color:#000;text-align:right;"><span style="display:inline-block;transform:scaleX(0.99);transform-origin:right">7,893,400</span></div>
<div class="t" style="right:1498px;top:1043px;font-size:20px;line-height:20px;font-weight:normal;color:#000;text-align:right;"><span style="display:inline-block;transform:scaleX(0.99);transform-origin:right">2,706,400</span></div>
<div class="t" style="right:1366px;top:1043px;font-size:20px;line-height:20px;font-weight:normal;color:#000;text-align:right;"><span style="display:inline-block;transform:scaleX(0.99);transform-origin:right">7,891,400</span></div>
<div class="t" style="right:1498px;top:1070px;font-size:20px;line-height:20px;font-weight:normal;color:#000;text-align:right;"><span style="display:inline-block;transform:scaleX(0.99);transform-origin:right">2,447,150</span></div>
<div class="t" style="right:1366px;top:1070px;font-size:20px;line-height:20px;font-weight:normal;color:#000;text-align:right;"><span style="display:inline-block;transform:scaleX(0.99);transform-origin:right">7,892,150</span></div>
<div class="t" style="right:1498px;top:1097px;font-size:20px;line-height:20px;font-weight:normal;color:#000;text-align:right;"><span style="display:inline-block;transform:scaleX(0.99);transform-origin:right">2,174,900</span></div>
<div class="t" style="right:1366px;top:1097px;font-size:20px;line-height:20px;font-weight:normal;color:#000;text-align:right;"><span style="display:inline-block;transform:scaleX(0.99);transform-origin:right">7,889,900</span></div>
<div class="t" style="right:1498px;top:1124px;font-size:20px;line-height:20px;font-weight:normal;color:#000;text-align:right;"><span style="display:inline-block;transform:scaleX(0.99);transform-origin:right">1,946,300</span></div>
<div class="t" style="right:1366px;top:1124px;font-size:20px;line-height:20px;font-weight:normal;color:#000;text-align:right;"><span style="display:inline-block;transform:scaleX(0.99);transform-origin:right">7,891,300</span></div>
<div class="t" style="right:1498px;top:1151px;font-size:20px;line-height:20px;font-weight:normal;color:#000;text-align:right;"><span style="display:inline-block;transform:scaleX(0.99);transform-origin:right">1,708,500</span></div>
<div class="t" style="right:1366px;top:1151px;font-size:20px;line-height:20px;font-weight:normal;color:#000;text-align:right;"><span style="display:inline-block;transform:scaleX(0.99);transform-origin:right">7,893,500</span></div>
<div class="t" style="right:1498px;top:1178px;font-size:20px;line-height:20px;font-weight:normal;color:#000;text-align:right;"><span style="display:inline-block;transform:scaleX(0.99);transform-origin:right">1,399,250</span></div>
<div class="t" style="right:1366px;top:1178px;font-size:20px;line-height:20px;font-weight:normal;color:#000;text-align:right;"><span style="display:inline-block;transform:scaleX(0.99);transform-origin:right">7,894,250</span></div>
<div class="t" style="right:1498px;top:1205px;font-size:20px;line-height:20px;font-weight:normal;color:#000;text-align:right;"><span style="display:inline-block;transform:scaleX(0.99);transform-origin:right">1,074,500</span></div>
<div class="t" style="right:1366px;top:1205px;font-size:20px;line-height:20px;font-weight:normal;color:#000;text-align:right;"><span style="display:inline-block;transform:scaleX(0.99);transform-origin:right">7,889,500</span></div>
<div class="t" style="right:1498px;top:1232px;font-size:20px;line-height:20px;font-weight:normal;color:#000;text-align:right;"><span style="display:inline-block;transform:scaleX(0.99);transform-origin:right">733,750</span></div>
<div class="t" style="right:1366px;top:1232px;font-size:20px;line-height:20px;font-weight:normal;color:#000;text-align:right;"><span style="display:inline-block;transform:scaleX(0.99);transform-origin:right">7,893,750</span></div>
<div class="t" style="right:1498px;top:1259px;font-size:20px;line-height:20px;font-weight:normal;color:#000;text-align:right;"><span style="display:inline-block;transform:scaleX(0.99);transform-origin:right">375,750</span></div>
<div class="t" style="right:1366px;top:1259px;font-size:20px;line-height:20px;font-weight:normal;color:#000;text-align:right;"><span style="display:inline-block;transform:scaleX(0.99);transform-origin:right">7,890,750</span></div>
<div class="t" style="right:1498px;top:1287px;font-size:20px;line-height:20px;font-weight:normal;color:#000;text-align:right;"><span style="display:inline-block;transform:scaleX(0.943);transform-origin:right">-</span></div>
<div class="t" style="right:1366px;top:1287px;font-size:20px;line-height:20px;font-weight:normal;color:#000;text-align:right;"><span style="display:inline-block;transform:scaleX(0.943);transform-origin:right">-</span></div>
<div class="t" style="right:1498px;top:1314px;font-size:20px;line-height:20px;font-weight:normal;color:#000;text-align:right;"><span style="display:inline-block;transform:scaleX(0.943);transform-origin:right">-</span></div>
<div class="t" style="right:1366px;top:1314px;font-size:20px;line-height:20px;font-weight:normal;color:#000;text-align:right;"><span style="display:inline-block;transform:scaleX(0.943);transform-origin:right">-</span></div>
<div class="t" style="right:1498px;top:1341px;font-size:20px;line-height:20px;font-weight:normal;color:#000;text-align:right;"><span style="display:inline-block;transform:scaleX(0.943);transform-origin:right">-</span></div>
<div class="t" style="right:1366px;top:1341px;font-size:20px;line-height:20px;font-weight:normal;color:#000;text-align:right;"><span style="display:inline-block;transform:scaleX(0.943);transform-origin:right">-</span></div>
<div class="t" style="right:2190px;top:1367px;font-size:20px;line-height:20px;font-weight:normal;color:#000;text-align:right;"><span style="display:inline-block;transform:scaleX(0.99);transform-origin:right">1,790,000</span></div>
<div class="t" style="right:2045px;top:1368px;font-size:20px;line-height:20px;font-weight:normal;color:#000;text-align:right;"><span style="display:inline-block;transform:scaleX(0.943);transform-origin:right">-</span></div>
<div class="t" style="right:1900px;top:1367px;font-size:20px;line-height:20px;font-weight:normal;color:#000;text-align:right;"><span style="display:inline-block;transform:scaleX(0.99);transform-origin:right">1,790,000</span></div>
<div class="t" style="right:1498px;top:1367px;font-size:20px;line-height:20px;font-weight:normal;color:#000;text-align:right;"><span style="display:inline-block;transform:scaleX(0.99);transform-origin:right">98,729,400</span></div>
<div class="t" style="right:1366px;top:1367px;font-size:20px;line-height:20px;font-weight:normal;color:#000;text-align:right;"><span style="display:inline-block;transform:scaleX(0.99);transform-origin:right">215,959,400</span></div>
<div class="t" style="right:1246px;top:719px;font-size:20px;line-height:20px;font-weight:normal;color:#000;text-align:right;"><span style="display:inline-block;transform:scaleX(0.98);transform-origin:right">6/15/2025</span></div>
<div class="t" style="left:2599px;top:719px;font-size:20px;line-height:20px;font-weight:normal;color:#000;"><span style="display:inline-block;transform:scaleX(0.972);transform-origin:left">91802RBX6</span></div>
<div class="t" style="right:984px;top:719px;font-size:20px;line-height:20px;font-weight:normal;color:#000;text-align:right;"><span style="display:inline-block;transform:scaleX(0.99);transform-origin:right">40,970,000</span></div>
<div class="t" style="right:694px;top:719px;font-size:20px;line-height:20px;font-weight:normal;color:#000;text-align:right;"><span style="display:inline-block;transform:scaleX(0.99);transform-origin:right">40,970,000</span></div>
<div class="t" style="right:598px;top:719px;font-size:20px;line-height:20px;font-weight:normal;color:#000;text-align:right;"><span style="display:inline-block;transform:scaleX(0.99);transform-origin:right">5.000%</span></div>
<div class="t" style="right:508px;top:719px;font-size:20px;line-height:20px;font-weight:normal;color:#000;text-align:right;"><span style="display:inline-block;transform:scaleX(0.99);transform-origin:right">1.660%</span></div>
<div class="t" style="right:418px;top:719px;font-size:20px;line-height:20px;font-weight:normal;color:#000;text-align:right;"><span style="display:inline-block;transform:scaleX(0.98);transform-origin:right">6/15/23</span></div>
<div class="t" style="right:1246px;top:746px;font-size:20px;line-height:20px;font-weight:normal;color:#000;text-align:right;"><span style="display:inline-block;transform:scaleX(0.98);transform-origin:right">6/15/2026</span></div>
<div class="t" style="left:2599px;top:746px;font-size:20px;line-height:20px;font-weight:normal;color:#000;"><span style="display:inline-block;transform:scaleX(0.972);transform-origin:left">91802RBZ1</span></div>
<div class="t" style="right:984px;top:746px;font-size:20px;line-height:20px;font-weight:normal;color:#000;text-align:right;"><span style="display:inline-block;transform:scaleX(0.99);transform-origin:right">65,835,000</span></div>
<div class="t" style="right:694px;top:746px;font-size:20px;line-height:20px;font-weight:normal;color:#000;text-align:right;"><span style="display:inline-block;transform:scaleX(0.99);transform-origin:right">65,835,000</span></div>
<div class="t" style="right:598px;top:746px;font-size:20px;line-height:20px;font-weight:normal;color:#000;text-align:right;"><span style="display:inline-block;transform:scaleX(0.99);transform-origin:right">5.000%</span></div>
<div class="t" style="right:508px;top:746px;font-size:20px;line-height:20px;font-weight:normal;color:#000;text-align:right;"><span style="display:inline-block;transform:scaleX(0.99);transform-origin:right">1.870%</span></div>
<div class="t" style="right:418px;top:746px;font-size:20px;line-height:20px;font-weight:normal;color:#000;text-align:right;"><span style="display:inline-block;transform:scaleX(0.98);transform-origin:right">6/15/24</span></div>
<div class="t" style="right:1246px;top:773px;font-size:20px;line-height:20px;font-weight:normal;color:#000;text-align:right;"><span style="display:inline-block;transform:scaleX(0.98);transform-origin:right">6/15/2027</span></div>
<div class="t" style="left:2599px;top:773px;font-size:20px;line-height:20px;font-weight:normal;color:#000;"><span style="display:inline-block;transform:scaleX(0.972);transform-origin:left">91802RCJ6</span></div>
<div class="t" style="right:984px;top:773px;font-size:20px;line-height:20px;font-weight:normal;color:#000;text-align:right;"><span style="display:inline-block;transform:scaleX(0.99);transform-origin:right">41,230,000</span></div>
<div class="t" style="right:694px;top:773px;font-size:20px;line-height:20px;font-weight:normal;color:#000;text-align:right;"><span style="display:inline-block;transform:scaleX(0.99);transform-origin:right">41,230,000</span></div>
<div class="t" style="right:598px;top:773px;font-size:20px;line-height:20px;font-weight:normal;color:#000;text-align:right;"><span style="display:inline-block;transform:scaleX(0.99);transform-origin:right">5.000%</span></div>
<div class="t" style="right:508px;top:773px;font-size:20px;line-height:20px;font-weight:normal;color:#000;text-align:right;"><span style="display:inline-block;transform:scaleX(0.99);transform-origin:right">2.060%</span></div>
<div class="t" style="right:418px;top:773px;font-size:20px;line-height:20px;font-weight:normal;color:#000;text-align:right;"><span style="display:inline-block;transform:scaleX(0.98);transform-origin:right">6/15/25</span></div>
<div class="t" style="right:1246px;top:800px;font-size:20px;line-height:20px;font-weight:normal;color:#000;text-align:right;"><span style="display:inline-block;transform:scaleX(0.98);transform-origin:right">6/15/2028</span></div>
<div class="t" style="left:2599px;top:800px;font-size:20px;line-height:20px;font-weight:normal;color:#000;"><span style="display:inline-block;transform:scaleX(0.972);transform-origin:left">91802RCL1</span></div>
<div class="t" style="right:984px;top:800px;font-size:20px;line-height:20px;font-weight:normal;color:#000;text-align:right;"><span style="display:inline-block;transform:scaleX(0.99);transform-origin:right">41,600,000</span></div>
<div class="t" style="right:694px;top:800px;font-size:20px;line-height:20px;font-weight:normal;color:#000;text-align:right;"><span style="display:inline-block;transform:scaleX(0.99);transform-origin:right">41,600,000</span></div>
<div class="t" style="right:598px;top:800px;font-size:20px;line-height:20px;font-weight:normal;color:#000;text-align:right;"><span style="display:inline-block;transform:scaleX(0.99);transform-origin:right">5.000%</span></div>
<div class="t" style="right:508px;top:800px;font-size:20px;line-height:20px;font-weight:normal;color:#000;text-align:right;"><span style="display:inline-block;transform:scaleX(0.99);transform-origin:right">2.200%</span></div>
<div class="t" style="right:418px;top:800px;font-size:20px;line-height:20px;font-weight:normal;color:#000;text-align:right;"><span style="display:inline-block;transform:scaleX(0.98);transform-origin:right">6/15/26</span></div>
<div class="t" style="right:1246px;top:854px;font-size:20px;line-height:20px;font-weight:normal;color:#000;text-align:right;"><span style="display:inline-block;transform:scaleX(0.98);transform-origin:right">12/15/2030</span></div>
<div class="t" style="left:2599px;top:854px;font-size:20px;line-height:20px;font-weight:normal;color:#000;"><span style="display:inline-block;transform:scaleX(0.972);transform-origin:left">91802RCC1</span></div>
<div class="t" style="right:984px;top:854px;font-size:20px;line-height:20px;font-weight:normal;color:#000;text-align:right;"><span style="display:inline-block;transform:scaleX(0.99);transform-origin:right">850,000</span></div>
<div class="t" style="right:694px;top:854px;font-size:20px;line-height:20px;font-weight:normal;color:#000;text-align:right;"><span style="display:inline-block;transform:scaleX(0.99);transform-origin:right">850,000</span></div>
<div class="t" style="right:598px;top:854px;font-size:20px;line-height:20px;font-weight:normal;color:#000;text-align:right;"><span style="display:inline-block;transform:scaleX(0.99);transform-origin:right">5.000%</span></div>
<div class="t" style="right:508px;top:854px;font-size:20px;line-height:20px;font-weight:normal;color:#000;text-align:right;"><span style="display:inline-block;transform:scaleX(0.99);transform-origin:right">2.350%</span></div>
<div class="t" style="right:418px;top:854px;font-size:20px;line-height:20px;font-weight:normal;color:#000;text-align:right;"><span style="display:inline-block;transform:scaleX(0.98);transform-origin:right">6/15/26</span></div>
<div class="t" style="right:1246px;top:881px;font-size:20px;line-height:20px;font-weight:normal;color:#000;text-align:right;"><span style="display:inline-block;transform:scaleX(0.98);transform-origin:right">12/15/2031</span></div>
<div class="t" style="left:2599px;top:881px;font-size:20px;line-height:20px;font-weight:normal;color:#000;"><span style="display:inline-block;transform:scaleX(0.972);transform-origin:left">91802RCD9</span></div>
<div class="t" style="right:984px;top:881px;font-size:20px;line-height:20px;font-weight:normal;color:#000;text-align:right;"><span style="display:inline-block;transform:scaleX(0.99);transform-origin:right">890,000</span></div>
<div class="t" style="right:694px;top:881px;font-size:20px;line-height:20px;font-weight:normal;color:#000;text-align:right;"><span style="display:inline-block;transform:scaleX(0.99);transform-origin:right">890,000</span></div>
<div class="t" style="right:598px;top:881px;font-size:20px;line-height:20px;font-weight:normal;color:#000;text-align:right;"><span style="display:inline-block;transform:scaleX(0.99);transform-origin:right">5.000%</span></div>
<div class="t" style="right:508px;top:881px;font-size:20px;line-height:20px;font-weight:normal;color:#000;text-align:right;"><span style="display:inline-block;transform:scaleX(0.99);transform-origin:right">2.440%</span></div>
<div class="t" style="right:418px;top:881px;font-size:20px;line-height:20px;font-weight:normal;color:#000;text-align:right;"><span style="display:inline-block;transform:scaleX(0.98);transform-origin:right">6/15/26</span></div>
<div class="t" style="right:1246px;top:908px;font-size:20px;line-height:20px;font-weight:normal;color:#000;text-align:right;"><span style="display:inline-block;transform:scaleX(0.98);transform-origin:right">12/15/2032</span></div>
<div class="t" style="left:2599px;top:908px;font-size:20px;line-height:20px;font-weight:normal;color:#000;"><span style="display:inline-block;transform:scaleX(0.972);transform-origin:left">91802RCE7</span></div>
<div class="t" style="right:984px;top:908px;font-size:20px;line-height:20px;font-weight:normal;color:#000;text-align:right;"><span style="display:inline-block;transform:scaleX(0.99);transform-origin:right">20,560,000</span></div>
<div class="t" style="right:694px;top:908px;font-size:20px;line-height:20px;font-weight:normal;color:#000;text-align:right;"><span style="display:inline-block;transform:scaleX(0.99);transform-origin:right">20,560,000</span></div>
<div class="t" style="right:598px;top:908px;font-size:20px;line-height:20px;font-weight:normal;color:#000;text-align:right;"><span style="display:inline-block;transform:scaleX(0.99);transform-origin:right">5.000%</span></div>
<div class="t" style="right:508px;top:908px;font-size:20px;line-height:20px;font-weight:normal;color:#000;text-align:right;"><span style="display:inline-block;transform:scaleX(0.99);transform-origin:right">2.530%</span></div>
<div class="t" style="right:418px;top:908px;font-size:20px;line-height:20px;font-weight:normal;color:#000;text-align:right;"><span style="display:inline-block;transform:scaleX(0.98);transform-origin:right">6/15/26</span></div>
<div class="t" style="right:1246px;top:935px;font-size:20px;line-height:20px;font-weight:normal;color:#000;text-align:right;"><span style="display:inline-block;transform:scaleX(0.98);transform-origin:right">12/15/2033</span></div>
<div class="t" style="left:2599px;top:935px;font-size:20px;line-height:20px;font-weight:normal;color:#000;"><span style="display:inline-block;transform:scaleX(0.972);transform-origin:left">91802RCF4</span></div>
<div class="t" style="right:984px;top:935px;font-size:20px;line-height:20px;font-weight:normal;color:#000;text-align:right;"><span style="display:inline-block;transform:scaleX(0.99);transform-origin:right">54,260,000</span></div>
<div class="t" style="right:694px;top:935px;font-size:20px;line-height:20px;font-weight:normal;color:#000;text-align:right;"><span style="display:inline-block;transform:scaleX(0.99);transform-origin:right">54,260,000</span></div>
<div class="t" style="right:598px;top:935px;font-size:20px;line-height:20px;font-weight:normal;color:#000;text-align:right;"><span style="display:inline-block;transform:scaleX(0.99);transform-origin:right">5.000%</span></div>
<div class="t" style="right:508px;top:935px;font-size:20px;line-height:20px;font-weight:normal;color:#000;text-align:right;"><span style="display:inline-block;transform:scaleX(0.99);transform-origin:right">2.580%</span></div>
<div class="t" style="right:418px;top:935px;font-size:20px;line-height:20px;font-weight:normal;color:#000;text-align:right;"><span style="display:inline-block;transform:scaleX(0.98);transform-origin:right">6/15/26</span></div>
<div class="t" style="right:1246px;top:962px;font-size:20px;line-height:20px;font-weight:normal;color:#000;text-align:right;"><span style="display:inline-block;transform:scaleX(0.98);transform-origin:right">12/15/2034</span></div>
<div class="t" style="left:2599px;top:962px;font-size:20px;line-height:20px;font-weight:normal;color:#000;"><span style="display:inline-block;transform:scaleX(0.972);transform-origin:left">91802RCG2</span></div>
<div class="t" style="right:984px;top:962px;font-size:20px;line-height:20px;font-weight:normal;color:#000;text-align:right;"><span style="display:inline-block;transform:scaleX(0.99);transform-origin:right">113,520,000</span></div>
<div class="t" style="right:694px;top:962px;font-size:20px;line-height:20px;font-weight:normal;color:#000;text-align:right;"><span style="display:inline-block;transform:scaleX(0.99);transform-origin:right">113,520,000</span></div>
<div class="t" style="right:598px;top:962px;font-size:20px;line-height:20px;font-weight:normal;color:#000;text-align:right;"><span style="display:inline-block;transform:scaleX(0.99);transform-origin:right">5.000%</span></div>
<div class="t" style="right:508px;top:962px;font-size:20px;line-height:20px;font-weight:normal;color:#000;text-align:right;"><span style="display:inline-block;transform:scaleX(0.99);transform-origin:right">2.630%</span></div>
<div class="t" style="right:418px;top:962px;font-size:20px;line-height:20px;font-weight:normal;color:#000;text-align:right;"><span style="display:inline-block;transform:scaleX(0.98);transform-origin:right">6/15/26</span></div>
<div class="t" style="right:1246px;top:989px;font-size:20px;line-height:20px;font-weight:normal;color:#000;text-align:right;"><span style="display:inline-block;transform:scaleX(0.98);transform-origin:right">12/15/2035</span></div>
<div class="t" style="left:2599px;top:989px;font-size:20px;line-height:20px;font-weight:normal;color:#000;"><span style="display:inline-block;transform:scaleX(0.972);transform-origin:left">91802RCH0</span></div>
<div class="t" style="right:984px;top:989px;font-size:20px;line-height:20px;font-weight:normal;color:#000;text-align:right;"><span style="display:inline-block;transform:scaleX(0.99);transform-origin:right">61,870,000</span></div>
<div class="t" style="right:694px;top:989px;font-size:20px;line-height:20px;font-weight:normal;color:#000;text-align:right;"><span style="display:inline-block;transform:scaleX(0.99);transform-origin:right">61,870,000</span></div>
<div class="t" style="right:598px;top:989px;font-size:20px;line-height:20px;font-weight:normal;color:#000;text-align:right;"><span style="display:inline-block;transform:scaleX(0.99);transform-origin:right">5.000%</span></div>
<div class="t" style="right:508px;top:989px;font-size:20px;line-height:20px;font-weight:normal;color:#000;text-align:right;"><span style="display:inline-block;transform:scaleX(0.99);transform-origin:right">2.680%</span></div>
<div class="t" style="right:418px;top:989px;font-size:20px;line-height:20px;font-weight:normal;color:#000;text-align:right;"><span style="display:inline-block;transform:scaleX(0.98);transform-origin:right">6/15/26</span></div>
<div class="t" style="right:984px;top:1367px;font-size:20px;line-height:20px;font-weight:normal;color:#000;text-align:right;"><span style="display:inline-block;transform:scaleX(0.99);transform-origin:right">441,585,000</span></div>
<div class="t" style="right:839px;top:1368px;font-size:20px;line-height:20px;font-weight:normal;color:#000;text-align:right;"><span style="display:inline-block;transform:scaleX(0.943);transform-origin:right">-</span></div>
<div class="t" style="right:694px;top:1367px;font-size:20px;line-height:20px;font-weight:normal;color:#000;text-align:right;"><span style="display:inline-block;transform:scaleX(0.99);transform-origin:right">441,585,000</span></div>
<div class="t" style="right:418px;top:1367px;font-size:20px;line-height:20px;font-weight:normal;color:#000;text-align:right;"><span style="display:inline-block;transform:scaleX(0.98);transform-origin:right">6/15/23</span></div>
<div class="t" style="right:304px;top:719px;font-size:20px;line-height:20px;font-weight:normal;color:#000;text-align:right;"><span style="display:inline-block;transform:scaleX(0.98);transform-origin:right">12/15/2025</span></div>
<div class="t" style="left:3541px;top:719px;font-size:20px;line-height:20px;font-weight:normal;color:#000;"><span style="display:inline-block;transform:scaleX(0.972);transform-origin:left">91802RBY4</span></div>
<div class="t" style="right:39px;top:719px;font-size:20px;line-height:20px;font-weight:normal;color:#000;text-align:right;"><span style="display:inline-block;transform:scaleX(0.99);transform-origin:right">41,995,000</span></div>
<div class="t" style="right:304px;top:746px;font-size:20px;line-height:20px;font-weight:normal;color:#000;text-align:right;"><span style="display:inline-block;transform:scaleX(0.98);transform-origin:right">12/15/2026</span></div>
<div class="t" style="left:3541px;top:746px;font-size:20px;line-height:20px;font-weight:normal;color:#000;"><span style="display:inline-block;transform:scaleX(0.972);transform-origin:left">91802RCA5</span></div>
<div class="t" style="right:39px;top:746px;font-size:20px;line-height:20px;font-weight:normal;color:#000;text-align:right;"><span style="display:inline-block;transform:scaleX(0.99);transform-origin:right">67,480,000</span></div>
<div class="t" style="right:304px;top:773px;font-size:20px;line-height:20px;font-weight:normal;color:#000;text-align:right;"><span style="display:inline-block;transform:scaleX(0.98);transform-origin:right">12/15/2027</span></div>
<div class="t" style="left:3541px;top:773px;font-size:20px;line-height:20px;font-weight:normal;color:#000;"><span style="display:inline-block;transform:scaleX(0.972);transform-origin:left">91802RCK3</span></div>
<div class="t" style="right:39px;top:773px;font-size:20px;line-height:20px;font-weight:normal;color:#000;text-align:right;"><span style="display:inline-block;transform:scaleX(0.99);transform-origin:right">42,260,000</span></div>
<div class="t" style="right:304px;top:800px;font-size:20px;line-height:20px;font-weight:normal;color:#000;text-align:right;"><span style="display:inline-block;transform:scaleX(0.98);transform-origin:right">12/15/2028</span></div>
<div class="t" style="left:3541px;top:800px;font-size:20px;line-height:20px;font-weight:normal;color:#000;"><span style="display:inline-block;transform:scaleX(0.972);transform-origin:left">91802RCM9</span></div>
<div class="t" style="right:39px;top:800px;font-size:20px;line-height:20px;font-weight:normal;color:#000;text-align:right;"><span style="display:inline-block;transform:scaleX(0.99);transform-origin:right">42,640,000</span></div>
<div class="t" style="right:39px;top:1367px;font-size:20px;line-height:20px;font-weight:normal;color:#000;text-align:right;"><span style="display:inline-block;transform:scaleX(0.99);transform-origin:right">194,375,000</span></div>
<div class="t" style="left:1010.0px;width:800px;top:340px;font-size:30px;line-height:30px;font-weight:bold;color:#000;text-align:center;margin-top:-10px">2015B</div>
<div class="t" style="left:3161.5px;width:800px;top:340px;font-size:30px;line-height:30px;font-weight:bold;color:#000;text-align:center;margin-top:-10px">2016A</div>
<div class="t" style="left:1007.0px;width:800px;top:368px;font-size:20px;line-height:20px;font-weight:normal;color:#000;text-align:center;"><span style="display:inline-block;transform:scaleX(0.99);transform-origin:center">$117,230,000</span></div>
<div class="t" style="left:1010.0px;width:800px;top:395px;font-size:20px;line-height:20px;font-weight:normal;color:#000;text-align:center;"><span style="display:inline-block;transform:scaleX(0.943);transform-origin:center">Long Island Power Authority</span></div>
<div class="t" style="left:1010.0px;width:800px;top:422px;font-size:20px;line-height:20px;font-weight:normal;color:#000;text-align:center;"><span style="display:inline-block;transform:scaleX(0.943);transform-origin:center">Long Island Power Authority</span></div>
<div class="t" style="left:1010.0px;width:800px;top:449px;font-size:20px;line-height:20px;font-weight:normal;color:#000;text-align:center;"><span style="display:inline-block;transform:scaleX(0.943);transform-origin:center">FED &amp; ST TAX-EXEMPT</span></div>
<div class="t" style="left:1010.0px;width:800px;top:476px;font-size:20px;line-height:20px;font-weight:normal;color:#000;text-align:center;"><span style="display:inline-block;transform:scaleX(0.943);transform-origin:center">NEW MONEY</span></div>
<div class="t" style="left:3158.5px;width:800px;top:368px;font-size:20px;line-height:20px;font-weight:normal;color:#000;text-align:center;"><span style="display:inline-block;transform:scaleX(0.99);transform-origin:center">$636,770,000</span></div>
<div class="t" style="left:3161.5px;width:800px;top:395px;font-size:20px;line-height:20px;font-weight:normal;color:#000;text-align:center;"><span style="display:inline-block;transform:scaleX(0.943);transform-origin:center">Utility Debt Securitization Authority</span></div>
<div class="t" style="left:3161.5px;width:800px;top:422px;font-size:20px;line-height:20px;font-weight:normal;color:#000;text-align:center;"><span style="display:inline-block;transform:scaleX(0.943);transform-origin:center">Utility Debt Securitization Authority</span></div>
<div class="t" style="left:3161.5px;width:800px;top:449px;font-size:20px;line-height:20px;font-weight:normal;color:#000;text-align:center;"><span style="display:inline-block;transform:scaleX(0.943);transform-origin:center">FED &amp; ST TAX-EXEMPT</span></div>
<div class="t" style="left:3161.5px;width:800px;top:476px;font-size:20px;line-height:20px;font-weight:normal;color:#000;text-align:center;"><span style="display:inline-block;transform:scaleX(0.943);transform-origin:center">REFUNDING</span></div>
<div class="t" style="left:1010.0px;width:800px;top:1421px;font-size:20px;line-height:20px;font-weight:normal;color:#000;text-align:center;"><span style="display:inline-block;transform:scaleX(0.99);transform-origin:center">$115,440,000</span></div>
<div class="t" style="left:1010.0px;width:800px;top:1448px;font-size:20px;line-height:20px;font-weight:normal;color:#000;text-align:center;"><span style="display:inline-block;transform:scaleX(0.99);transform-origin:center">$117,230,000</span></div>
<div class="t" style="left:1010.0px;width:800px;top:1475px;font-size:20px;line-height:20px;font-weight:normal;color:#000;text-align:center;"><span style="display:inline-block;transform:scaleX(0.99);transform-origin:center">$5,000</span></div>
<div class="t" style="left:1010.0px;width:800px;top:1502px;font-size:20px;line-height:20px;font-weight:normal;color:#000;text-align:center;"><span style="display:inline-block;transform:scaleX(0.943);transform-origin:center">ELEC SYS GENERAL REVENUE-SER B</span></div>
<div class="t" style="left:1010.0px;width:800px;top:1529px;font-size:20px;line-height:20px;font-weight:normal;color:#000;text-align:center;"><span style="display:inline-block;transform:scaleX(0.943);transform-origin:center">NEW MONEY</span></div>
<div class="t" style="left:1010.0px;width:800px;top:1556px;font-size:20px;line-height:20px;font-weight:normal;color:#000;text-align:center;"><span style="display:inline-block;transform:scaleX(0.943);transform-origin:center">ELEC. LT. &amp; PWR. IMPTS.</span></div>
<div class="t" style="left:1010.0px;width:800px;top:1583px;font-size:20px;line-height:20px;font-weight:normal;color:#000;text-align:center;"><span style="display:inline-block;transform:scaleX(0.943);transform-origin:center">N</span></div>
<div class="t" style="left:1010.0px;width:800px;top:1610px;font-size:20px;line-height:20px;font-weight:normal;color:#000;text-align:center;"><span style="display:inline-block;transform:scaleX(0.943);transform-origin:center">N</span></div>
<div class="t" style="left:1010.0px;width:800px;top:1637px;font-size:20px;line-height:20px;font-weight:normal;color:#000;text-align:center;"><span style="display:inline-block;transform:scaleX(0.943);transform-origin:center">N</span></div>
<div class="t" style="left:1010.0px;width:800px;top:1691px;font-size:20px;line-height:20px;font-weight:normal;color:#000;text-align:center;"><span style="display:inline-block;transform:scaleX(0.943);transform-origin:center">N</span></div>
<div class="t" style="left:1010.0px;width:800px;top:1718px;font-size:20px;line-height:20px;font-weight:normal;color:#000;text-align:center;"><span style="display:inline-block;transform:scaleX(0.98);transform-origin:center">11/16/2015</span></div>
<div class="t" style="left:1010.0px;width:800px;top:1745px;font-size:20px;line-height:20px;font-weight:normal;color:#000;text-align:center;"><span style="display:inline-block;transform:scaleX(0.98);transform-origin:center">12/1/2015</span></div>
<div class="t" style="left:1010.0px;width:800px;top:1772px;font-size:20px;line-height:20px;font-weight:normal;color:#000;text-align:center;"><span style="display:inline-block;transform:scaleX(0.98);transform-origin:center">12/1/2015</span></div>
<div class="t" style="left:1010.0px;width:800px;top:1799px;font-size:20px;line-height:20px;font-weight:normal;color:#000;text-align:center;"><span style="display:inline-block;transform:scaleX(0.98);transform-origin:center">3/1/2016</span></div>
<div class="t" style="left:1010.0px;width:800px;top:1826px;font-size:20px;line-height:20px;font-weight:normal;color:#000;text-align:center;"><span style="display:inline-block;transform:scaleX(0.98);transform-origin:center">3/1/2016</span></div>
<div class="t" style="left:3161.0px;width:800px;top:1421px;font-size:20px;line-height:20px;font-weight:normal;color:#000;text-align:center;"><span style="display:inline-block;transform:scaleX(0.99);transform-origin:center">$441,585,000</span></div>
<div class="t" style="left:3161.0px;width:800px;top:1448px;font-size:20px;line-height:20px;font-weight:normal;color:#000;text-align:center;"><span style="display:inline-block;transform:scaleX(0.99);transform-origin:center">$636,770,000</span></div>
<div class="t" style="left:3161.0px;width:800px;top:1475px;font-size:20px;line-height:20px;font-weight:normal;color:#000;text-align:center;"><span style="display:inline-block;transform:scaleX(0.99);transform-origin:center">$5,000</span></div>
<div class="t" style="left:3161.0px;width:800px;top:1502px;font-size:20px;line-height:20px;font-weight:normal;color:#000;text-align:center;"><span style="display:inline-block;transform:scaleX(0.943);transform-origin:center">REF-RESTRUCTURING-SER A</span></div>
<div class="t" style="left:3161.0px;width:800px;top:1529px;font-size:20px;line-height:20px;font-weight:normal;color:#000;text-align:center;"><span style="display:inline-block;transform:scaleX(0.943);transform-origin:center">REFUNDING</span></div>
<div class="t" style="left:3161.0px;width:800px;top:1556px;font-size:20px;line-height:20px;font-weight:normal;color:#000;text-align:center;"><span style="display:inline-block;transform:scaleX(0.943);transform-origin:center">CURRENT REFUNDING</span></div>
<div class="t" style="left:3161.0px;width:800px;top:1583px;font-size:20px;line-height:20px;font-weight:normal;color:#000;text-align:center;"><span style="display:inline-block;transform:scaleX(0.943);transform-origin:center">N</span></div>
<div class="t" style="left:3161.0px;width:800px;top:1610px;font-size:20px;line-height:20px;font-weight:normal;color:#000;text-align:center;"><span style="display:inline-block;transform:scaleX(0.943);transform-origin:center">N</span></div>
<div class="t" style="left:3161.0px;width:800px;top:1637px;font-size:20px;line-height:20px;font-weight:normal;color:#000;text-align:center;"><span style="display:inline-block;transform:scaleX(0.943);transform-origin:center">N</span></div>
<div class="t" style="left:3161.0px;width:800px;top:1691px;font-size:20px;line-height:20px;font-weight:normal;color:#000;text-align:center;"><span style="display:inline-block;transform:scaleX(0.943);transform-origin:center">N</span></div>
<div class="t" style="left:3161.0px;width:800px;top:1718px;font-size:20px;line-height:20px;font-weight:normal;color:#000;text-align:center;"><span style="display:inline-block;transform:scaleX(0.98);transform-origin:center">2/29/2016</span></div>
<div class="t" style="left:3161.0px;width:800px;top:1745px;font-size:20px;line-height:20px;font-weight:normal;color:#000;text-align:center;"><span style="display:inline-block;transform:scaleX(0.98);transform-origin:center">4/7/2016</span></div>
<div class="t" style="left:3161.0px;width:800px;top:1772px;font-size:20px;line-height:20px;font-weight:normal;color:#000;text-align:center;"><span style="display:inline-block;transform:scaleX(0.98);transform-origin:center">4/7/2016</span></div>
<div class="t" style="left:3161.0px;width:800px;top:1799px;font-size:20px;line-height:20px;font-weight:normal;color:#000;text-align:center;"><span style="display:inline-block;transform:scaleX(0.98);transform-origin:center">12/15/2016</span></div>
<div class="t" style="left:3161.0px;width:800px;top:1826px;font-size:20px;line-height:20px;font-weight:normal;color:#000;text-align:center;"><span style="display:inline-block;transform:scaleX(0.98);transform-origin:center">12/15/2016</span></div>
<div class="t" style="right:1365px;top:1665px;font-size:20px;line-height:20px;font-weight:normal;color:#000;text-align:right;"><span style="display:inline-block;transform:scaleX(0.943);transform-origin:right">-</span></div>
<div class="t" style="right:1365px;top:1854px;font-size:20px;line-height:20px;font-weight:normal;color:#000;text-align:right;"><span style="display:inline-block;transform:scaleX(0.943);transform-origin:right">-</span></div>
<div class="t" style="right:1365px;top:1881px;font-size:20px;line-height:20px;font-weight:normal;color:#000;text-align:right;"><span style="display:inline-block;transform:scaleX(0.943);transform-origin:right">-</span></div>
<div class="t" style="right:1365px;top:1908px;font-size:20px;line-height:20px;font-weight:normal;color:#000;text-align:right;"><span style="display:inline-block;transform:scaleX(0.943);transform-origin:right">-</span></div>
<div class="t" style="right:1365px;top:1935px;font-size:20px;line-height:20px;font-weight:normal;color:#000;text-align:right;"><span style="display:inline-block;transform:scaleX(0.943);transform-origin:right">-</span></div>
<div style="left:338px;top:213px;width:2px;height:1759px;background:#9e9e9e;"></div>
<div style="left:94px;top:295px;width:50px;height:32px;border:3px solid #217346"></div>
<div style="left:141px;top:318px;width:6px;height:2px;background:#fff;"></div>
<div style="left:134px;top:324px;width:3px;height:6px;background:#fff;"></div>
<div style="left:137px;top:320px;width:8px;height:8px;background:#217346;"></div>
<div style="left:3801px;top:297px;width:1px;height:1675px;background:#9b9b9b;"></div>
<div style="left:3802px;top:297px;width:36px;height:1675px;background:#e6e6e6;"></div>
<div style="left:3804px;top:246px;width:33px;height:1726px;background:#dadada;"></div>
<div style="left:3804px;top:214px;width:33px;height:33px;background:#fff;border:1px solid #a5a5a5"></div>
<svg style="position:absolute;left:3804px;top:214px" width="33" height="33" viewBox="0 0 33 33"><polygon points="7,20.5 25,20.5 16,12" fill="#777"/></svg>
<div style="left:3804px;top:246px;width:33px;height:683px;background:#fff;border:1px solid #a5a5a5"></div>
<div style="left:3804px;top:1941px;width:33px;height:40px;background:#fff;border:1px solid #a5a5a5"></div>
<svg style="position:absolute;left:3804px;top:1941px" width="33" height="31" viewBox="0 0 33 31"><polygon points="8,13 24,13 16,21" fill="#777"/></svg>
</body></html>
